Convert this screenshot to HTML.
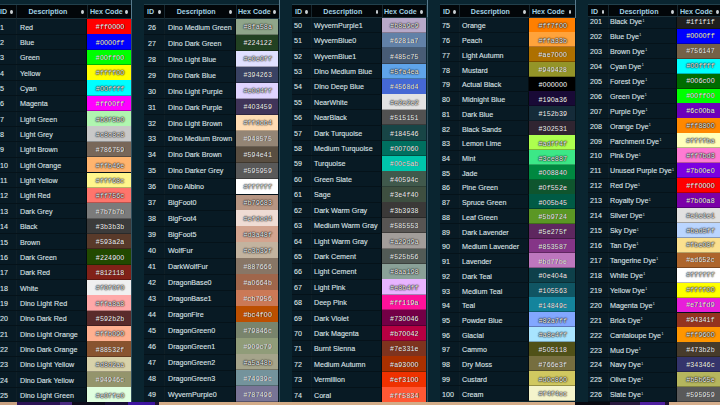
<!DOCTYPE html><html><head><meta charset="utf-8"><style>
html,body{margin:0;padding:0;}
body{width:720px;height:405px;overflow:hidden;position:relative;background:#0a2530;font-family:"Liberation Sans",sans-serif;}
.a{position:absolute;box-sizing:border-box;}
.t{position:absolute;white-space:nowrap;font-size:8.1px;letter-spacing:0px;color:#dde2e6;-webkit-text-stroke:0.12px #dde2e6;transform:scaleX(0.88);transform-origin:0 50%;}
.h{position:absolute;white-space:nowrap;font-size:8.1px;font-weight:bold;color:#a2d2e4;transform:scaleX(0.875);transform-origin:0 50%;}
.x{position:absolute;white-space:nowrap;font-family:"Liberation Mono",monospace;font-size:7.4px;color:#f6f6f6;text-align:center;transform:scaleX(0.92);}
.sup{font-size:4px;vertical-align:2.6px;margin-left:0.4px;line-height:0;-webkit-text-stroke:0;}
.dot{position:absolute;width:2.8px;height:4px;border-radius:50%;background:#c9cfd2;}

</style></head><body>
<div class="a" style="left:-3.50px;top:4.7px;width:134.80px;height:398.05px;background:#081a24"></div>
<div class="a" style="left:16.00px;top:19.00px;width:0.8px;height:383.75px;background:#0f1f27"></div>
<div class="a" style="left:86.20px;top:19.00px;width:0.9px;height:383.75px;background:#040c10"></div>
<div class="a" style="left:-3.50px;top:33.75px;width:90.50px;height:0.8px;background:#051219"></div>
<div class="a" style="left:87.00px;top:19.00px;width:44.30px;height:15.35px;background:#ff0000"></div>
<div class="a" style="left:87.00px;top:33.55px;width:44.30px;height:0.8px;background:rgba(0,0,0,0.28)"></div>
<div class="t" style="left:0.30px;top:19.60px;height:15.35px;line-height:15.35px;">1</div>
<div class="t" style="left:20.00px;top:19.60px;height:15.35px;line-height:15.35px;">Red</div>
<div class="x" style="left:87.50px;width:44.30px;top:20.40px;height:15.35px;line-height:15.35px;text-shadow:0.4px 0.4px 0.6px #000">#ffOOOO</div>
<div class="a" style="left:-3.50px;top:49.10px;width:90.50px;height:0.8px;background:#051219"></div>
<div class="a" style="left:87.00px;top:34.35px;width:44.30px;height:15.35px;background:#0000ff"></div>
<div class="a" style="left:87.00px;top:48.90px;width:44.30px;height:0.8px;background:rgba(0,0,0,0.28)"></div>
<div class="t" style="left:0.30px;top:34.95px;height:15.35px;line-height:15.35px;">2</div>
<div class="t" style="left:20.00px;top:34.95px;height:15.35px;line-height:15.35px;">Blue</div>
<div class="x" style="left:87.50px;width:44.30px;top:35.75px;height:15.35px;line-height:15.35px;text-shadow:0.4px 0.4px 0.6px #000">#OOOOff</div>
<div class="a" style="left:-3.50px;top:64.45px;width:90.50px;height:0.8px;background:#051219"></div>
<div class="a" style="left:87.00px;top:49.70px;width:44.30px;height:15.35px;background:#00ff00"></div>
<div class="a" style="left:87.00px;top:64.25px;width:44.30px;height:0.8px;background:rgba(0,0,0,0.28)"></div>
<div class="t" style="left:0.30px;top:50.30px;height:15.35px;line-height:15.35px;">3</div>
<div class="t" style="left:20.00px;top:50.30px;height:15.35px;line-height:15.35px;">Green</div>
<div class="x" style="left:87.50px;width:44.30px;top:51.10px;height:15.35px;line-height:15.35px;text-shadow:0.4px 0.4px 0.6px #000">#OOffOO</div>
<div class="a" style="left:-3.50px;top:79.80px;width:90.50px;height:0.8px;background:#051219"></div>
<div class="a" style="left:87.00px;top:65.05px;width:44.30px;height:15.35px;background:#ffff00"></div>
<div class="a" style="left:87.00px;top:79.60px;width:44.30px;height:0.8px;background:rgba(0,0,0,0.28)"></div>
<div class="t" style="left:0.30px;top:65.65px;height:15.35px;line-height:15.35px;">4</div>
<div class="t" style="left:20.00px;top:65.65px;height:15.35px;line-height:15.35px;">Yellow</div>
<div class="x" style="left:87.50px;width:44.30px;top:66.45px;height:15.35px;line-height:15.35px;color:#f6f6f6;text-shadow:0 0 1px #000,0 0 1.5px #000,0 0 2px rgba(0,0,0,0.6)">#ffffOO</div>
<div class="a" style="left:-3.50px;top:95.15px;width:90.50px;height:0.8px;background:#051219"></div>
<div class="a" style="left:87.00px;top:80.40px;width:44.30px;height:15.35px;background:#00ffff"></div>
<div class="a" style="left:87.00px;top:94.95px;width:44.30px;height:0.8px;background:rgba(0,0,0,0.28)"></div>
<div class="t" style="left:0.30px;top:81.00px;height:15.35px;line-height:15.35px;">5</div>
<div class="t" style="left:20.00px;top:81.00px;height:15.35px;line-height:15.35px;">Cyan</div>
<div class="x" style="left:87.50px;width:44.30px;top:81.80px;height:15.35px;line-height:15.35px;color:#f6f6f6;text-shadow:0 0 1px #000,0 0 1.5px #000,0 0 2px rgba(0,0,0,0.6)">#OOffff</div>
<div class="a" style="left:-3.50px;top:110.50px;width:90.50px;height:0.8px;background:#051219"></div>
<div class="a" style="left:87.00px;top:95.75px;width:44.30px;height:15.35px;background:#ff00ff"></div>
<div class="a" style="left:87.00px;top:110.30px;width:44.30px;height:0.8px;background:rgba(0,0,0,0.28)"></div>
<div class="t" style="left:0.30px;top:96.35px;height:15.35px;line-height:15.35px;">6</div>
<div class="t" style="left:20.00px;top:96.35px;height:15.35px;line-height:15.35px;">Magenta</div>
<div class="x" style="left:87.50px;width:44.30px;top:97.15px;height:15.35px;line-height:15.35px;text-shadow:0.4px 0.4px 0.6px #000">#ffOOff</div>
<div class="a" style="left:-3.50px;top:125.85px;width:90.50px;height:0.8px;background:#051219"></div>
<div class="a" style="left:87.00px;top:111.10px;width:44.30px;height:15.35px;background:#b0f5b0"></div>
<div class="a" style="left:87.00px;top:125.65px;width:44.30px;height:0.8px;background:rgba(0,0,0,0.28)"></div>
<div class="t" style="left:0.30px;top:111.70px;height:15.35px;line-height:15.35px;">7</div>
<div class="t" style="left:20.00px;top:111.70px;height:15.35px;line-height:15.35px;">Light Green</div>
<div class="x" style="left:87.50px;width:44.30px;top:112.50px;height:15.35px;line-height:15.35px;color:#f6f6f6;text-shadow:0 0 1px #000,0 0 1.5px #000,0 0 2px rgba(0,0,0,0.6)">#bOf5bO</div>
<div class="a" style="left:-3.50px;top:141.20px;width:90.50px;height:0.8px;background:#051219"></div>
<div class="a" style="left:87.00px;top:126.45px;width:44.30px;height:15.35px;background:#c8c8c8"></div>
<div class="a" style="left:87.00px;top:141.00px;width:44.30px;height:0.8px;background:rgba(0,0,0,0.28)"></div>
<div class="t" style="left:0.30px;top:127.05px;height:15.35px;line-height:15.35px;">8</div>
<div class="t" style="left:20.00px;top:127.05px;height:15.35px;line-height:15.35px;">Light Grey</div>
<div class="x" style="left:87.50px;width:44.30px;top:127.85px;height:15.35px;line-height:15.35px;color:#f6f6f6;text-shadow:0 0 1px #000,0 0 1.5px #000,0 0 2px rgba(0,0,0,0.6)">#c8c8c8</div>
<div class="a" style="left:-3.50px;top:156.55px;width:90.50px;height:0.8px;background:#051219"></div>
<div class="a" style="left:87.00px;top:141.80px;width:44.30px;height:15.35px;background:#786759"></div>
<div class="a" style="left:87.00px;top:156.35px;width:44.30px;height:0.8px;background:rgba(0,0,0,0.28)"></div>
<div class="t" style="left:0.30px;top:142.40px;height:15.35px;line-height:15.35px;">9</div>
<div class="t" style="left:20.00px;top:142.40px;height:15.35px;line-height:15.35px;">Light Brown</div>
<div class="x" style="left:87.50px;width:44.30px;top:143.20px;height:15.35px;line-height:15.35px;text-shadow:0.4px 0.4px 0.6px #000">#786759</div>
<div class="a" style="left:-3.50px;top:171.90px;width:90.50px;height:0.8px;background:#051219"></div>
<div class="a" style="left:87.00px;top:157.15px;width:44.30px;height:15.35px;background:#ffb46e"></div>
<div class="a" style="left:87.00px;top:171.70px;width:44.30px;height:0.8px;background:rgba(0,0,0,0.28)"></div>
<div class="t" style="left:0.30px;top:157.75px;height:15.35px;line-height:15.35px;">10</div>
<div class="t" style="left:20.00px;top:157.75px;height:15.35px;line-height:15.35px;">Light Orange</div>
<div class="x" style="left:87.50px;width:44.30px;top:158.55px;height:15.35px;line-height:15.35px;color:#f6f6f6;text-shadow:0 0 1px #000,0 0 1.5px #000,0 0 2px rgba(0,0,0,0.6)">#ffb46e</div>
<div class="a" style="left:-3.50px;top:187.25px;width:90.50px;height:0.8px;background:#051219"></div>
<div class="a" style="left:87.00px;top:172.50px;width:44.30px;height:15.35px;background:#fff68c"></div>
<div class="a" style="left:87.00px;top:187.05px;width:44.30px;height:0.8px;background:rgba(0,0,0,0.28)"></div>
<div class="t" style="left:0.30px;top:173.10px;height:15.35px;line-height:15.35px;">11</div>
<div class="t" style="left:20.00px;top:173.10px;height:15.35px;line-height:15.35px;">Light Yellow</div>
<div class="x" style="left:87.50px;width:44.30px;top:173.90px;height:15.35px;line-height:15.35px;color:#f6f6f6;text-shadow:0 0 1px #000,0 0 1.5px #000,0 0 2px rgba(0,0,0,0.6)">#fff68c</div>
<div class="a" style="left:-3.50px;top:202.60px;width:90.50px;height:0.8px;background:#051219"></div>
<div class="a" style="left:87.00px;top:187.85px;width:44.30px;height:15.35px;background:#ff756c"></div>
<div class="a" style="left:87.00px;top:202.40px;width:44.30px;height:0.8px;background:rgba(0,0,0,0.28)"></div>
<div class="t" style="left:0.30px;top:188.45px;height:15.35px;line-height:15.35px;">12</div>
<div class="t" style="left:20.00px;top:188.45px;height:15.35px;line-height:15.35px;">Light Red</div>
<div class="x" style="left:87.50px;width:44.30px;top:189.25px;height:15.35px;line-height:15.35px;color:#f6f6f6;text-shadow:0 0 1px #000,0 0 1.5px #000,0 0 2px rgba(0,0,0,0.6)">#ff756c</div>
<div class="a" style="left:-3.50px;top:217.95px;width:90.50px;height:0.8px;background:#051219"></div>
<div class="a" style="left:87.00px;top:203.20px;width:44.30px;height:15.35px;background:#7b7b7b"></div>
<div class="a" style="left:87.00px;top:217.75px;width:44.30px;height:0.8px;background:rgba(0,0,0,0.28)"></div>
<div class="t" style="left:0.30px;top:203.80px;height:15.35px;line-height:15.35px;">13</div>
<div class="t" style="left:20.00px;top:203.80px;height:15.35px;line-height:15.35px;">Dark Grey</div>
<div class="x" style="left:87.50px;width:44.30px;top:204.60px;height:15.35px;line-height:15.35px;text-shadow:0.4px 0.4px 0.6px #000">#7b7b7b</div>
<div class="a" style="left:-3.50px;top:233.30px;width:90.50px;height:0.8px;background:#051219"></div>
<div class="a" style="left:87.00px;top:218.55px;width:44.30px;height:15.35px;background:#3b3b3b"></div>
<div class="a" style="left:87.00px;top:233.10px;width:44.30px;height:0.8px;background:rgba(0,0,0,0.28)"></div>
<div class="t" style="left:0.30px;top:219.15px;height:15.35px;line-height:15.35px;">14</div>
<div class="t" style="left:20.00px;top:219.15px;height:15.35px;line-height:15.35px;">Black</div>
<div class="x" style="left:87.50px;width:44.30px;top:219.95px;height:15.35px;line-height:15.35px;text-shadow:0.4px 0.4px 0.6px #000">#3b3b3b</div>
<div class="a" style="left:-3.50px;top:248.65px;width:90.50px;height:0.8px;background:#051219"></div>
<div class="a" style="left:87.00px;top:233.90px;width:44.30px;height:15.35px;background:#593a2a"></div>
<div class="a" style="left:87.00px;top:248.45px;width:44.30px;height:0.8px;background:rgba(0,0,0,0.28)"></div>
<div class="t" style="left:0.30px;top:234.50px;height:15.35px;line-height:15.35px;">15</div>
<div class="t" style="left:20.00px;top:234.50px;height:15.35px;line-height:15.35px;">Brown</div>
<div class="x" style="left:87.50px;width:44.30px;top:235.30px;height:15.35px;line-height:15.35px;text-shadow:0.4px 0.4px 0.6px #000">#593a2a</div>
<div class="a" style="left:-3.50px;top:264.00px;width:90.50px;height:0.8px;background:#051219"></div>
<div class="a" style="left:87.00px;top:249.25px;width:44.30px;height:15.35px;background:#224900"></div>
<div class="a" style="left:87.00px;top:263.80px;width:44.30px;height:0.8px;background:rgba(0,0,0,0.28)"></div>
<div class="t" style="left:0.30px;top:249.85px;height:15.35px;line-height:15.35px;">16</div>
<div class="t" style="left:20.00px;top:249.85px;height:15.35px;line-height:15.35px;">Dark Green</div>
<div class="x" style="left:87.50px;width:44.30px;top:250.65px;height:15.35px;line-height:15.35px;text-shadow:0.4px 0.4px 0.6px #000">#2249OO</div>
<div class="a" style="left:-3.50px;top:279.35px;width:90.50px;height:0.8px;background:#051219"></div>
<div class="a" style="left:87.00px;top:264.60px;width:44.30px;height:15.35px;background:#812118"></div>
<div class="a" style="left:87.00px;top:279.15px;width:44.30px;height:0.8px;background:rgba(0,0,0,0.28)"></div>
<div class="t" style="left:0.30px;top:265.20px;height:15.35px;line-height:15.35px;">17</div>
<div class="t" style="left:20.00px;top:265.20px;height:15.35px;line-height:15.35px;">Dark Red</div>
<div class="x" style="left:87.50px;width:44.30px;top:266.00px;height:15.35px;line-height:15.35px;text-shadow:0.4px 0.4px 0.6px #000">#812118</div>
<div class="a" style="left:-3.50px;top:294.70px;width:90.50px;height:0.8px;background:#051219"></div>
<div class="a" style="left:87.00px;top:279.95px;width:44.30px;height:15.35px;background:#f0f0f0"></div>
<div class="a" style="left:87.00px;top:294.50px;width:44.30px;height:0.8px;background:rgba(0,0,0,0.28)"></div>
<div class="t" style="left:0.30px;top:280.55px;height:15.35px;line-height:15.35px;">18</div>
<div class="t" style="left:20.00px;top:280.55px;height:15.35px;line-height:15.35px;">White</div>
<div class="x" style="left:87.50px;width:44.30px;top:281.35px;height:15.35px;line-height:15.35px;color:#f6f6f6;text-shadow:0 0 1px #000,0 0 1.5px #000,0 0 2px rgba(0,0,0,0.6)">#fOfOfO</div>
<div class="a" style="left:-3.50px;top:310.05px;width:90.50px;height:0.8px;background:#051219"></div>
<div class="a" style="left:87.00px;top:295.30px;width:44.30px;height:15.35px;background:#ffa8a8"></div>
<div class="a" style="left:87.00px;top:309.85px;width:44.30px;height:0.8px;background:rgba(0,0,0,0.28)"></div>
<div class="t" style="left:0.30px;top:295.90px;height:15.35px;line-height:15.35px;">19</div>
<div class="t" style="left:20.00px;top:295.90px;height:15.35px;line-height:15.35px;">Dino Light Red</div>
<div class="x" style="left:87.50px;width:44.30px;top:296.70px;height:15.35px;line-height:15.35px;color:#f6f6f6;text-shadow:0 0 1px #000,0 0 1.5px #000,0 0 2px rgba(0,0,0,0.6)">#ffa8a8</div>
<div class="a" style="left:-3.50px;top:325.40px;width:90.50px;height:0.8px;background:#051219"></div>
<div class="a" style="left:87.00px;top:310.65px;width:44.30px;height:15.35px;background:#592b2b"></div>
<div class="a" style="left:87.00px;top:325.20px;width:44.30px;height:0.8px;background:rgba(0,0,0,0.28)"></div>
<div class="t" style="left:0.30px;top:311.25px;height:15.35px;line-height:15.35px;">20</div>
<div class="t" style="left:20.00px;top:311.25px;height:15.35px;line-height:15.35px;">Dino Dark Red</div>
<div class="x" style="left:87.50px;width:44.30px;top:312.05px;height:15.35px;line-height:15.35px;text-shadow:0.4px 0.4px 0.6px #000">#592b2b</div>
<div class="a" style="left:-3.50px;top:340.75px;width:90.50px;height:0.8px;background:#051219"></div>
<div class="a" style="left:87.00px;top:326.00px;width:44.30px;height:15.35px;background:#ffb090"></div>
<div class="a" style="left:87.00px;top:340.55px;width:44.30px;height:0.8px;background:rgba(0,0,0,0.28)"></div>
<div class="t" style="left:0.30px;top:326.60px;height:15.35px;line-height:15.35px;">21</div>
<div class="t" style="left:20.00px;top:326.60px;height:15.35px;line-height:15.35px;">Dino Light Orange</div>
<div class="x" style="left:87.50px;width:44.30px;top:327.40px;height:15.35px;line-height:15.35px;color:#f6f6f6;text-shadow:0 0 1px #000,0 0 1.5px #000,0 0 2px rgba(0,0,0,0.6)">#ffbO9O</div>
<div class="a" style="left:-3.50px;top:356.10px;width:90.50px;height:0.8px;background:#051219"></div>
<div class="a" style="left:87.00px;top:341.35px;width:44.30px;height:15.35px;background:#88532f"></div>
<div class="a" style="left:87.00px;top:355.90px;width:44.30px;height:0.8px;background:rgba(0,0,0,0.28)"></div>
<div class="t" style="left:0.30px;top:341.95px;height:15.35px;line-height:15.35px;">22</div>
<div class="t" style="left:20.00px;top:341.95px;height:15.35px;line-height:15.35px;">Dino Dark Orange</div>
<div class="x" style="left:87.50px;width:44.30px;top:342.75px;height:15.35px;line-height:15.35px;text-shadow:0.4px 0.4px 0.6px #000">#88532f</div>
<div class="a" style="left:-3.50px;top:371.45px;width:90.50px;height:0.8px;background:#051219"></div>
<div class="a" style="left:87.00px;top:356.70px;width:44.30px;height:15.35px;background:#d8d2aa"></div>
<div class="a" style="left:87.00px;top:371.25px;width:44.30px;height:0.8px;background:rgba(0,0,0,0.28)"></div>
<div class="t" style="left:0.30px;top:357.30px;height:15.35px;line-height:15.35px;">23</div>
<div class="t" style="left:20.00px;top:357.30px;height:15.35px;line-height:15.35px;">Dino Light Yellow</div>
<div class="x" style="left:87.50px;width:44.30px;top:358.10px;height:15.35px;line-height:15.35px;color:#f6f6f6;text-shadow:0 0 1px #000,0 0 1.5px #000,0 0 2px rgba(0,0,0,0.6)">#d8d2aa</div>
<div class="a" style="left:-3.50px;top:386.80px;width:90.50px;height:0.8px;background:#051219"></div>
<div class="a" style="left:87.00px;top:372.05px;width:44.30px;height:15.35px;background:#94946c"></div>
<div class="a" style="left:87.00px;top:386.60px;width:44.30px;height:0.8px;background:rgba(0,0,0,0.28)"></div>
<div class="t" style="left:0.30px;top:372.65px;height:15.35px;line-height:15.35px;">24</div>
<div class="t" style="left:20.00px;top:372.65px;height:15.35px;line-height:15.35px;">Dino Dark Yellow</div>
<div class="x" style="left:87.50px;width:44.30px;top:373.45px;height:15.35px;line-height:15.35px;text-shadow:0.4px 0.4px 0.6px #000">#94946c</div>
<div class="a" style="left:-3.50px;top:402.15px;width:90.50px;height:0.8px;background:#051219"></div>
<div class="a" style="left:87.00px;top:387.40px;width:44.30px;height:15.35px;background:#e0ffe0"></div>
<div class="a" style="left:87.00px;top:401.95px;width:44.30px;height:0.8px;background:rgba(0,0,0,0.28)"></div>
<div class="t" style="left:0.30px;top:388.00px;height:15.35px;line-height:15.35px;">25</div>
<div class="t" style="left:20.00px;top:388.00px;height:15.35px;line-height:15.35px;">Dino Light Green</div>
<div class="x" style="left:87.50px;width:44.30px;top:388.80px;height:15.35px;line-height:15.35px;color:#f6f6f6;text-shadow:0 0 1px #000,0 0 1.5px #000,0 0 2px rgba(0,0,0,0.6)">#eOffeO</div>
<div class="a" style="left:-3.50px;top:4.2px;width:134.80px;height:14.80px;background:#020609;border-top:1px solid #22404c"></div>
<div class="a" style="left:-3.50px;top:18.40px;width:134.80px;height:1px;background:#1c313a"></div>
<div class="h" style="left:0.10px;top:7.30px;height:10px;line-height:10px;">ID</div>
<div class="h" style="left:16.00px;top:7.30px;height:10px;line-height:10px;width:63.80px;text-align:center;transform-origin:50% 50%;">Description</div>
<div class="h" style="left:89.50px;top:7.30px;height:10px;line-height:10px;">Hex Code</div>
<div class="dot" style="left:9.90px;top:9.9px"></div>
<div class="dot" style="left:80.90px;top:9.9px"></div>
<div class="dot" style="left:125.20px;top:9.9px"></div>
<div class="a" style="left:16.00px;top:4.7px;width:1px;height:14.30px;background:#16262e"></div>
<div class="a" style="left:87.00px;top:4.7px;width:1px;height:14.30px;background:#16262e"></div>
<div class="a" style="left:131.30px;top:0px;width:1px;height:19.00px;background:#587a8c"></div>
<div class="a" style="left:131.30px;top:19.00px;width:1px;height:383.75px;background:rgba(140,170,190,0.32)"></div>
<div class="a" style="left:144.40px;top:4.7px;width:134.60px;height:397.55px;background:#081a24"></div>
<div class="a" style="left:164.00px;top:18.73px;width:0.8px;height:383.52px;background:#0f1f27"></div>
<div class="a" style="left:234.70px;top:18.73px;width:0.9px;height:383.52px;background:#040c10"></div>
<div class="a" style="left:144.40px;top:34.11px;width:91.10px;height:0.8px;background:#051219"></div>
<div class="a" style="left:235.50px;top:18.73px;width:42.50px;height:15.98px;background:#8fa58a"></div>
<div class="a" style="left:235.50px;top:33.91px;width:43.50px;height:0.8px;background:rgba(0,0,0,0.28)"></div>
<div class="t" style="left:147.60px;top:19.63px;height:15.98px;line-height:15.98px;">26</div>
<div class="t" style="left:168.00px;top:19.63px;height:15.98px;line-height:15.98px;">Dino Medium Green</div>
<div class="x" style="left:236.00px;width:43.50px;top:20.13px;height:15.98px;line-height:15.98px;color:#f6f6f6;text-shadow:0 0 1px #000,0 0 1.5px #000,0 0 2px rgba(0,0,0,0.6)">#8fa58a</div>
<div class="a" style="left:144.40px;top:50.09px;width:91.10px;height:0.8px;background:#051219"></div>
<div class="a" style="left:235.50px;top:34.71px;width:42.50px;height:15.98px;background:#224122"></div>
<div class="a" style="left:235.50px;top:49.89px;width:43.50px;height:0.8px;background:rgba(0,0,0,0.28)"></div>
<div class="t" style="left:147.60px;top:35.61px;height:15.98px;line-height:15.98px;">27</div>
<div class="t" style="left:168.00px;top:35.61px;height:15.98px;line-height:15.98px;">Dino Dark Green</div>
<div class="x" style="left:236.00px;width:43.50px;top:36.11px;height:15.98px;line-height:15.98px;text-shadow:0.4px 0.4px 0.6px #000">#224122</div>
<div class="a" style="left:144.40px;top:66.07px;width:91.10px;height:0.8px;background:#051219"></div>
<div class="a" style="left:235.50px;top:50.69px;width:42.50px;height:15.98px;background:#e0e0ff"></div>
<div class="a" style="left:235.50px;top:65.87px;width:43.50px;height:0.8px;background:rgba(0,0,0,0.28)"></div>
<div class="t" style="left:147.60px;top:51.59px;height:15.98px;line-height:15.98px;">28</div>
<div class="t" style="left:168.00px;top:51.59px;height:15.98px;line-height:15.98px;">Dino Light Blue</div>
<div class="x" style="left:236.00px;width:43.50px;top:52.09px;height:15.98px;line-height:15.98px;color:#f6f6f6;text-shadow:0 0 1px #000,0 0 1.5px #000,0 0 2px rgba(0,0,0,0.6)">#eOeOff</div>
<div class="a" style="left:144.40px;top:82.05px;width:91.10px;height:0.8px;background:#051219"></div>
<div class="a" style="left:235.50px;top:66.67px;width:42.50px;height:15.98px;background:#394263"></div>
<div class="a" style="left:235.50px;top:81.85px;width:43.50px;height:0.8px;background:rgba(0,0,0,0.28)"></div>
<div class="t" style="left:147.60px;top:67.57px;height:15.98px;line-height:15.98px;">29</div>
<div class="t" style="left:168.00px;top:67.57px;height:15.98px;line-height:15.98px;">Dino Dark Blue</div>
<div class="x" style="left:236.00px;width:43.50px;top:68.07px;height:15.98px;line-height:15.98px;text-shadow:0.4px 0.4px 0.6px #000">#394263</div>
<div class="a" style="left:144.40px;top:98.03px;width:91.10px;height:0.8px;background:#051219"></div>
<div class="a" style="left:235.50px;top:82.65px;width:42.50px;height:15.98px;background:#e0d4ff"></div>
<div class="a" style="left:235.50px;top:97.83px;width:43.50px;height:0.8px;background:rgba(0,0,0,0.28)"></div>
<div class="t" style="left:147.60px;top:83.55px;height:15.98px;line-height:15.98px;">30</div>
<div class="t" style="left:168.00px;top:83.55px;height:15.98px;line-height:15.98px;">Dino Light Purple</div>
<div class="x" style="left:236.00px;width:43.50px;top:84.05px;height:15.98px;line-height:15.98px;color:#f6f6f6;text-shadow:0 0 1px #000,0 0 1.5px #000,0 0 2px rgba(0,0,0,0.6)">#eOd4ff</div>
<div class="a" style="left:144.40px;top:114.01px;width:91.10px;height:0.8px;background:#051219"></div>
<div class="a" style="left:235.50px;top:98.63px;width:42.50px;height:15.98px;background:#403459"></div>
<div class="a" style="left:235.50px;top:113.81px;width:43.50px;height:0.8px;background:rgba(0,0,0,0.28)"></div>
<div class="t" style="left:147.60px;top:99.53px;height:15.98px;line-height:15.98px;">31</div>
<div class="t" style="left:168.00px;top:99.53px;height:15.98px;line-height:15.98px;">Dino Dark Purple</div>
<div class="x" style="left:236.00px;width:43.50px;top:100.03px;height:15.98px;line-height:15.98px;text-shadow:0.4px 0.4px 0.6px #000">#4O3459</div>
<div class="a" style="left:144.40px;top:129.99px;width:91.10px;height:0.8px;background:#051219"></div>
<div class="a" style="left:235.50px;top:114.61px;width:42.50px;height:15.98px;background:#ffdcb4"></div>
<div class="a" style="left:235.50px;top:129.79px;width:43.50px;height:0.8px;background:rgba(0,0,0,0.28)"></div>
<div class="t" style="left:147.60px;top:115.51px;height:15.98px;line-height:15.98px;">32</div>
<div class="t" style="left:168.00px;top:115.51px;height:15.98px;line-height:15.98px;">Dino Light Brown</div>
<div class="x" style="left:236.00px;width:43.50px;top:116.01px;height:15.98px;line-height:15.98px;color:#f6f6f6;text-shadow:0 0 1px #000,0 0 1.5px #000,0 0 2px rgba(0,0,0,0.6)">#ffdcb4</div>
<div class="a" style="left:144.40px;top:145.97px;width:91.10px;height:0.8px;background:#051219"></div>
<div class="a" style="left:235.50px;top:130.59px;width:42.50px;height:15.98px;background:#948575"></div>
<div class="a" style="left:235.50px;top:145.77px;width:43.50px;height:0.8px;background:rgba(0,0,0,0.28)"></div>
<div class="t" style="left:147.60px;top:131.49px;height:15.98px;line-height:15.98px;">33</div>
<div class="t" style="left:168.00px;top:131.49px;height:15.98px;line-height:15.98px;">Dino Medium Brown</div>
<div class="x" style="left:236.00px;width:43.50px;top:131.99px;height:15.98px;line-height:15.98px;text-shadow:0.4px 0.4px 0.6px #000">#948575</div>
<div class="a" style="left:144.40px;top:161.95px;width:91.10px;height:0.8px;background:#051219"></div>
<div class="a" style="left:235.50px;top:146.57px;width:42.50px;height:15.98px;background:#594e41"></div>
<div class="a" style="left:235.50px;top:161.75px;width:43.50px;height:0.8px;background:rgba(0,0,0,0.28)"></div>
<div class="t" style="left:147.60px;top:147.47px;height:15.98px;line-height:15.98px;">34</div>
<div class="t" style="left:168.00px;top:147.47px;height:15.98px;line-height:15.98px;">Dino Dark Brown</div>
<div class="x" style="left:236.00px;width:43.50px;top:147.97px;height:15.98px;line-height:15.98px;text-shadow:0.4px 0.4px 0.6px #000">#594e41</div>
<div class="a" style="left:144.40px;top:177.93px;width:91.10px;height:0.8px;background:#051219"></div>
<div class="a" style="left:235.50px;top:162.55px;width:42.50px;height:15.98px;background:#595959"></div>
<div class="a" style="left:235.50px;top:177.73px;width:43.50px;height:0.8px;background:rgba(0,0,0,0.28)"></div>
<div class="t" style="left:147.60px;top:163.45px;height:15.98px;line-height:15.98px;">35</div>
<div class="t" style="left:168.00px;top:163.45px;height:15.98px;line-height:15.98px;">Dino Darker Grey</div>
<div class="x" style="left:236.00px;width:43.50px;top:163.95px;height:15.98px;line-height:15.98px;text-shadow:0.4px 0.4px 0.6px #000">#595959</div>
<div class="a" style="left:144.40px;top:193.91px;width:91.10px;height:0.8px;background:#051219"></div>
<div class="a" style="left:235.50px;top:178.53px;width:42.50px;height:15.98px;background:#ffffff"></div>
<div class="a" style="left:235.50px;top:193.71px;width:43.50px;height:0.8px;background:rgba(0,0,0,0.28)"></div>
<div class="t" style="left:147.60px;top:179.43px;height:15.98px;line-height:15.98px;">36</div>
<div class="t" style="left:168.00px;top:179.43px;height:15.98px;line-height:15.98px;">Dino Albino</div>
<div class="x" style="left:236.00px;width:43.50px;top:179.93px;height:15.98px;line-height:15.98px;color:#f6f6f6;text-shadow:0 0 1px #000,0 0 1.5px #000,0 0 2px rgba(0,0,0,0.6)">#ffffff</div>
<div class="a" style="left:144.40px;top:209.89px;width:91.10px;height:0.8px;background:#051219"></div>
<div class="a" style="left:235.50px;top:194.51px;width:42.50px;height:15.98px;background:#b79683"></div>
<div class="a" style="left:235.50px;top:209.69px;width:43.50px;height:0.8px;background:rgba(0,0,0,0.28)"></div>
<div class="t" style="left:147.60px;top:195.41px;height:15.98px;line-height:15.98px;">37</div>
<div class="t" style="left:168.00px;top:195.41px;height:15.98px;line-height:15.98px;">BigFoot0</div>
<div class="x" style="left:236.00px;width:43.50px;top:195.91px;height:15.98px;line-height:15.98px;color:#f6f6f6;text-shadow:0 0 1px #000,0 0 1.5px #000,0 0 2px rgba(0,0,0,0.6)">#b79683</div>
<div class="a" style="left:144.40px;top:225.87px;width:91.10px;height:0.8px;background:#051219"></div>
<div class="a" style="left:235.50px;top:210.49px;width:42.50px;height:15.98px;background:#efdcd4"></div>
<div class="a" style="left:235.50px;top:225.67px;width:43.50px;height:0.8px;background:rgba(0,0,0,0.28)"></div>
<div class="t" style="left:147.60px;top:211.39px;height:15.98px;line-height:15.98px;">38</div>
<div class="t" style="left:168.00px;top:211.39px;height:15.98px;line-height:15.98px;">BigFoot4</div>
<div class="x" style="left:236.00px;width:43.50px;top:211.89px;height:15.98px;line-height:15.98px;color:#f6f6f6;text-shadow:0 0 1px #000,0 0 1.5px #000,0 0 2px rgba(0,0,0,0.6)">#efdcd4</div>
<div class="a" style="left:144.40px;top:241.85px;width:91.10px;height:0.8px;background:#051219"></div>
<div class="a" style="left:235.50px;top:226.47px;width:42.50px;height:15.98px;background:#d3a48f"></div>
<div class="a" style="left:235.50px;top:241.65px;width:43.50px;height:0.8px;background:rgba(0,0,0,0.28)"></div>
<div class="t" style="left:147.60px;top:227.37px;height:15.98px;line-height:15.98px;">39</div>
<div class="t" style="left:168.00px;top:227.37px;height:15.98px;line-height:15.98px;">BigFoot5</div>
<div class="x" style="left:236.00px;width:43.50px;top:227.87px;height:15.98px;line-height:15.98px;color:#f6f6f6;text-shadow:0 0 1px #000,0 0 1.5px #000,0 0 2px rgba(0,0,0,0.6)">#d3a48f</div>
<div class="a" style="left:144.40px;top:257.83px;width:91.10px;height:0.8px;background:#051219"></div>
<div class="a" style="left:235.50px;top:242.45px;width:42.50px;height:15.98px;background:#c3b39f"></div>
<div class="a" style="left:235.50px;top:257.63px;width:43.50px;height:0.8px;background:rgba(0,0,0,0.28)"></div>
<div class="t" style="left:147.60px;top:243.35px;height:15.98px;line-height:15.98px;">40</div>
<div class="t" style="left:168.00px;top:243.35px;height:15.98px;line-height:15.98px;">WolfFur</div>
<div class="x" style="left:236.00px;width:43.50px;top:243.85px;height:15.98px;line-height:15.98px;color:#f6f6f6;text-shadow:0 0 1px #000,0 0 1.5px #000,0 0 2px rgba(0,0,0,0.6)">#c3b39f</div>
<div class="a" style="left:144.40px;top:273.81px;width:91.10px;height:0.8px;background:#051219"></div>
<div class="a" style="left:235.50px;top:258.43px;width:42.50px;height:15.98px;background:#887666"></div>
<div class="a" style="left:235.50px;top:273.61px;width:43.50px;height:0.8px;background:rgba(0,0,0,0.28)"></div>
<div class="t" style="left:147.60px;top:259.33px;height:15.98px;line-height:15.98px;">41</div>
<div class="t" style="left:168.00px;top:259.33px;height:15.98px;line-height:15.98px;">DarkWolfFur</div>
<div class="x" style="left:236.00px;width:43.50px;top:259.83px;height:15.98px;line-height:15.98px;text-shadow:0.4px 0.4px 0.6px #000">#887666</div>
<div class="a" style="left:144.40px;top:289.79px;width:91.10px;height:0.8px;background:#051219"></div>
<div class="a" style="left:235.50px;top:274.41px;width:42.50px;height:15.98px;background:#a0664b"></div>
<div class="a" style="left:235.50px;top:289.59px;width:43.50px;height:0.8px;background:rgba(0,0,0,0.28)"></div>
<div class="t" style="left:147.60px;top:275.31px;height:15.98px;line-height:15.98px;">42</div>
<div class="t" style="left:168.00px;top:275.31px;height:15.98px;line-height:15.98px;">DragonBase0</div>
<div class="x" style="left:236.00px;width:43.50px;top:275.81px;height:15.98px;line-height:15.98px;text-shadow:0.4px 0.4px 0.6px #000">#aO664b</div>
<div class="a" style="left:144.40px;top:305.77px;width:91.10px;height:0.8px;background:#051219"></div>
<div class="a" style="left:235.50px;top:290.39px;width:42.50px;height:15.98px;background:#cb7956"></div>
<div class="a" style="left:235.50px;top:305.57px;width:43.50px;height:0.8px;background:rgba(0,0,0,0.28)"></div>
<div class="t" style="left:147.60px;top:291.29px;height:15.98px;line-height:15.98px;">43</div>
<div class="t" style="left:168.00px;top:291.29px;height:15.98px;line-height:15.98px;">DragonBase1</div>
<div class="x" style="left:236.00px;width:43.50px;top:291.79px;height:15.98px;line-height:15.98px;text-shadow:0.4px 0.4px 0.6px #000">#cb7956</div>
<div class="a" style="left:144.40px;top:321.75px;width:91.10px;height:0.8px;background:#051219"></div>
<div class="a" style="left:235.50px;top:306.37px;width:42.50px;height:15.98px;background:#bc4f00"></div>
<div class="a" style="left:235.50px;top:321.55px;width:43.50px;height:0.8px;background:rgba(0,0,0,0.28)"></div>
<div class="t" style="left:147.60px;top:307.27px;height:15.98px;line-height:15.98px;">44</div>
<div class="t" style="left:168.00px;top:307.27px;height:15.98px;line-height:15.98px;">DragonFire</div>
<div class="x" style="left:236.00px;width:43.50px;top:307.77px;height:15.98px;line-height:15.98px;text-shadow:0.4px 0.4px 0.6px #000">#bc4fOO</div>
<div class="a" style="left:144.40px;top:337.73px;width:91.10px;height:0.8px;background:#051219"></div>
<div class="a" style="left:235.50px;top:322.35px;width:42.50px;height:15.98px;background:#79846c"></div>
<div class="a" style="left:235.50px;top:337.53px;width:43.50px;height:0.8px;background:rgba(0,0,0,0.28)"></div>
<div class="t" style="left:147.60px;top:323.25px;height:15.98px;line-height:15.98px;">45</div>
<div class="t" style="left:168.00px;top:323.25px;height:15.98px;line-height:15.98px;">DragonGreen0</div>
<div class="x" style="left:236.00px;width:43.50px;top:323.75px;height:15.98px;line-height:15.98px;text-shadow:0.4px 0.4px 0.6px #000">#79846c</div>
<div class="a" style="left:144.40px;top:353.71px;width:91.10px;height:0.8px;background:#051219"></div>
<div class="a" style="left:235.50px;top:338.33px;width:42.50px;height:15.98px;background:#909c79"></div>
<div class="a" style="left:235.50px;top:353.51px;width:43.50px;height:0.8px;background:rgba(0,0,0,0.28)"></div>
<div class="t" style="left:147.60px;top:339.23px;height:15.98px;line-height:15.98px;">46</div>
<div class="t" style="left:168.00px;top:339.23px;height:15.98px;line-height:15.98px;">DragonGreen1</div>
<div class="x" style="left:236.00px;width:43.50px;top:339.73px;height:15.98px;line-height:15.98px;text-shadow:0.4px 0.4px 0.6px #000">#9O9c79</div>
<div class="a" style="left:144.40px;top:369.69px;width:91.10px;height:0.8px;background:#051219"></div>
<div class="a" style="left:235.50px;top:354.31px;width:42.50px;height:15.98px;background:#a5a48b"></div>
<div class="a" style="left:235.50px;top:369.49px;width:43.50px;height:0.8px;background:rgba(0,0,0,0.28)"></div>
<div class="t" style="left:147.60px;top:355.21px;height:15.98px;line-height:15.98px;">47</div>
<div class="t" style="left:168.00px;top:355.21px;height:15.98px;line-height:15.98px;">DragonGreen2</div>
<div class="x" style="left:236.00px;width:43.50px;top:355.71px;height:15.98px;line-height:15.98px;color:#f6f6f6;text-shadow:0 0 1px #000,0 0 1.5px #000,0 0 2px rgba(0,0,0,0.6)">#a5a48b</div>
<div class="a" style="left:144.40px;top:385.67px;width:91.10px;height:0.8px;background:#051219"></div>
<div class="a" style="left:235.50px;top:370.29px;width:42.50px;height:15.98px;background:#74939c"></div>
<div class="a" style="left:235.50px;top:385.47px;width:43.50px;height:0.8px;background:rgba(0,0,0,0.28)"></div>
<div class="t" style="left:147.60px;top:371.19px;height:15.98px;line-height:15.98px;">48</div>
<div class="t" style="left:168.00px;top:371.19px;height:15.98px;line-height:15.98px;">DragonGreen3</div>
<div class="x" style="left:236.00px;width:43.50px;top:371.69px;height:15.98px;line-height:15.98px;text-shadow:0.4px 0.4px 0.6px #000">#74939c</div>
<div class="a" style="left:144.40px;top:401.65px;width:91.10px;height:0.8px;background:#051219"></div>
<div class="a" style="left:235.50px;top:386.27px;width:42.50px;height:15.98px;background:#787496"></div>
<div class="a" style="left:235.50px;top:401.45px;width:43.50px;height:0.8px;background:rgba(0,0,0,0.28)"></div>
<div class="t" style="left:147.60px;top:387.17px;height:15.98px;line-height:15.98px;">49</div>
<div class="t" style="left:168.00px;top:387.17px;height:15.98px;line-height:15.98px;">WyvernPurple0</div>
<div class="x" style="left:236.00px;width:43.50px;top:387.67px;height:15.98px;line-height:15.98px;text-shadow:0.4px 0.4px 0.6px #000">#787496</div>
<div class="a" style="left:144.40px;top:4.2px;width:134.60px;height:14.53px;background:#020609;border-top:1px solid #22404c"></div>
<div class="a" style="left:144.40px;top:18.13px;width:134.60px;height:1px;background:#1c313a"></div>
<div class="h" style="left:147.40px;top:7.30px;height:10px;line-height:10px;">ID</div>
<div class="h" style="left:164.00px;top:7.30px;height:10px;line-height:10px;width:64.30px;text-align:center;transform-origin:50% 50%;">Description</div>
<div class="h" style="left:238.00px;top:7.30px;height:10px;line-height:10px;">Hex Code</div>
<div class="dot" style="left:157.90px;top:9.9px"></div>
<div class="dot" style="left:229.40px;top:9.9px"></div>
<div class="dot" style="left:272.90px;top:9.9px"></div>
<div class="a" style="left:164.00px;top:4.7px;width:1px;height:14.03px;background:#16262e"></div>
<div class="a" style="left:235.50px;top:4.7px;width:1px;height:14.03px;background:#16262e"></div>
<div class="a" style="left:279.00px;top:0px;width:1px;height:18.73px;background:#587a8c"></div>
<div class="a" style="left:279.00px;top:18.73px;width:1px;height:383.52px;background:rgba(140,170,190,0.32)"></div>
<div class="a" style="left:291.70px;top:4.7px;width:134.80px;height:398.03px;background:#081a24"></div>
<div class="a" style="left:311.00px;top:17.30px;width:0.8px;height:385.43px;background:#0f1f27"></div>
<div class="a" style="left:380.90px;top:17.30px;width:0.9px;height:385.43px;background:#040c10"></div>
<div class="a" style="left:291.70px;top:32.12px;width:90.00px;height:0.8px;background:#051219"></div>
<div class="a" style="left:381.70px;top:17.30px;width:44.80px;height:15.42px;background:#b8a9c9"></div>
<div class="a" style="left:381.70px;top:31.92px;width:44.80px;height:0.8px;background:rgba(0,0,0,0.28)"></div>
<div class="t" style="left:294.10px;top:17.70px;height:15.42px;line-height:15.42px;">50</div>
<div class="t" style="left:314.20px;top:17.70px;height:15.42px;line-height:15.42px;">WyvernPurple1</div>
<div class="x" style="left:382.20px;width:44.80px;top:18.70px;height:15.42px;line-height:15.42px;color:#f6f6f6;text-shadow:0 0 1px #000,0 0 1.5px #000,0 0 2px rgba(0,0,0,0.6)">#b8a9c9</div>
<div class="a" style="left:291.70px;top:47.53px;width:90.00px;height:0.8px;background:#051219"></div>
<div class="a" style="left:381.70px;top:32.72px;width:44.80px;height:15.42px;background:#6281a7"></div>
<div class="a" style="left:381.70px;top:47.33px;width:44.80px;height:0.8px;background:rgba(0,0,0,0.28)"></div>
<div class="t" style="left:294.10px;top:33.12px;height:15.42px;line-height:15.42px;">51</div>
<div class="t" style="left:314.20px;top:33.12px;height:15.42px;line-height:15.42px;">WyvernBlue0</div>
<div class="x" style="left:382.20px;width:44.80px;top:34.12px;height:15.42px;line-height:15.42px;text-shadow:0.4px 0.4px 0.6px #000">#6281a7</div>
<div class="a" style="left:291.70px;top:62.95px;width:90.00px;height:0.8px;background:#051219"></div>
<div class="a" style="left:381.70px;top:48.13px;width:44.80px;height:15.42px;background:#485c75"></div>
<div class="a" style="left:381.70px;top:62.75px;width:44.80px;height:0.8px;background:rgba(0,0,0,0.28)"></div>
<div class="t" style="left:294.10px;top:48.53px;height:15.42px;line-height:15.42px;">52</div>
<div class="t" style="left:314.20px;top:48.53px;height:15.42px;line-height:15.42px;">WyvernBlue1</div>
<div class="x" style="left:382.20px;width:44.80px;top:49.53px;height:15.42px;line-height:15.42px;text-shadow:0.4px 0.4px 0.6px #000">#485c75</div>
<div class="a" style="left:291.70px;top:78.37px;width:90.00px;height:0.8px;background:#051219"></div>
<div class="a" style="left:381.70px;top:63.55px;width:44.80px;height:15.42px;background:#5fa4ea"></div>
<div class="a" style="left:381.70px;top:78.17px;width:44.80px;height:0.8px;background:rgba(0,0,0,0.28)"></div>
<div class="t" style="left:294.10px;top:63.95px;height:15.42px;line-height:15.42px;">53</div>
<div class="t" style="left:314.20px;top:63.95px;height:15.42px;line-height:15.42px;">Dino Medium Blue</div>
<div class="x" style="left:382.20px;width:44.80px;top:64.95px;height:15.42px;line-height:15.42px;color:#f6f6f6;text-shadow:0 0 1px #000,0 0 1.5px #000,0 0 2px rgba(0,0,0,0.6)">#5fa4ea</div>
<div class="a" style="left:291.70px;top:93.79px;width:90.00px;height:0.8px;background:#051219"></div>
<div class="a" style="left:381.70px;top:78.97px;width:44.80px;height:15.42px;background:#4568d4"></div>
<div class="a" style="left:381.70px;top:93.59px;width:44.80px;height:0.8px;background:rgba(0,0,0,0.28)"></div>
<div class="t" style="left:294.10px;top:79.37px;height:15.42px;line-height:15.42px;">54</div>
<div class="t" style="left:314.20px;top:79.37px;height:15.42px;line-height:15.42px;">Dino Deep Blue</div>
<div class="x" style="left:382.20px;width:44.80px;top:80.37px;height:15.42px;line-height:15.42px;text-shadow:0.4px 0.4px 0.6px #000">#4568d4</div>
<div class="a" style="left:291.70px;top:109.20px;width:90.00px;height:0.8px;background:#051219"></div>
<div class="a" style="left:381.70px;top:94.38px;width:44.80px;height:15.42px;background:#e2e2e2"></div>
<div class="a" style="left:381.70px;top:109.00px;width:44.80px;height:0.8px;background:rgba(0,0,0,0.28)"></div>
<div class="t" style="left:294.10px;top:94.78px;height:15.42px;line-height:15.42px;">55</div>
<div class="t" style="left:314.20px;top:94.78px;height:15.42px;line-height:15.42px;">NearWhite</div>
<div class="x" style="left:382.20px;width:44.80px;top:95.78px;height:15.42px;line-height:15.42px;color:#f6f6f6;text-shadow:0 0 1px #000,0 0 1.5px #000,0 0 2px rgba(0,0,0,0.6)">#e2e2e2</div>
<div class="a" style="left:291.70px;top:124.62px;width:90.00px;height:0.8px;background:#051219"></div>
<div class="a" style="left:381.70px;top:109.80px;width:44.80px;height:15.42px;background:#515151"></div>
<div class="a" style="left:381.70px;top:124.42px;width:44.80px;height:0.8px;background:rgba(0,0,0,0.28)"></div>
<div class="t" style="left:294.10px;top:110.20px;height:15.42px;line-height:15.42px;">56</div>
<div class="t" style="left:314.20px;top:110.20px;height:15.42px;line-height:15.42px;">NearBlack</div>
<div class="x" style="left:382.20px;width:44.80px;top:111.20px;height:15.42px;line-height:15.42px;text-shadow:0.4px 0.4px 0.6px #000">#515151</div>
<div class="a" style="left:291.70px;top:140.04px;width:90.00px;height:0.8px;background:#051219"></div>
<div class="a" style="left:381.70px;top:125.22px;width:44.80px;height:15.42px;background:#184546"></div>
<div class="a" style="left:381.70px;top:139.84px;width:44.80px;height:0.8px;background:rgba(0,0,0,0.28)"></div>
<div class="t" style="left:294.10px;top:125.62px;height:15.42px;line-height:15.42px;">57</div>
<div class="t" style="left:314.20px;top:125.62px;height:15.42px;line-height:15.42px;">Dark Turquoise</div>
<div class="x" style="left:382.20px;width:44.80px;top:126.62px;height:15.42px;line-height:15.42px;text-shadow:0.4px 0.4px 0.6px #000">#184546</div>
<div class="a" style="left:291.70px;top:155.45px;width:90.00px;height:0.8px;background:#051219"></div>
<div class="a" style="left:381.70px;top:140.64px;width:44.80px;height:15.42px;background:#007060"></div>
<div class="a" style="left:381.70px;top:155.25px;width:44.80px;height:0.8px;background:rgba(0,0,0,0.28)"></div>
<div class="t" style="left:294.10px;top:141.04px;height:15.42px;line-height:15.42px;">58</div>
<div class="t" style="left:314.20px;top:141.04px;height:15.42px;line-height:15.42px;">Medium Turquoise</div>
<div class="x" style="left:382.20px;width:44.80px;top:142.04px;height:15.42px;line-height:15.42px;text-shadow:0.4px 0.4px 0.6px #000">#OO7O6O</div>
<div class="a" style="left:291.70px;top:170.87px;width:90.00px;height:0.8px;background:#051219"></div>
<div class="a" style="left:381.70px;top:156.05px;width:44.80px;height:15.42px;background:#00c5ab"></div>
<div class="a" style="left:381.70px;top:170.67px;width:44.80px;height:0.8px;background:rgba(0,0,0,0.28)"></div>
<div class="t" style="left:294.10px;top:156.45px;height:15.42px;line-height:15.42px;">59</div>
<div class="t" style="left:314.20px;top:156.45px;height:15.42px;line-height:15.42px;">Turquoise</div>
<div class="x" style="left:382.20px;width:44.80px;top:157.45px;height:15.42px;line-height:15.42px;text-shadow:0.4px 0.4px 0.6px #000">#OOc5ab</div>
<div class="a" style="left:291.70px;top:186.29px;width:90.00px;height:0.8px;background:#051219"></div>
<div class="a" style="left:381.70px;top:171.47px;width:44.80px;height:15.42px;background:#40594c"></div>
<div class="a" style="left:381.70px;top:186.09px;width:44.80px;height:0.8px;background:rgba(0,0,0,0.28)"></div>
<div class="t" style="left:294.10px;top:171.87px;height:15.42px;line-height:15.42px;">60</div>
<div class="t" style="left:314.20px;top:171.87px;height:15.42px;line-height:15.42px;">Green Slate</div>
<div class="x" style="left:382.20px;width:44.80px;top:172.87px;height:15.42px;line-height:15.42px;text-shadow:0.4px 0.4px 0.6px #000">#4O594c</div>
<div class="a" style="left:291.70px;top:201.70px;width:90.00px;height:0.8px;background:#051219"></div>
<div class="a" style="left:381.70px;top:186.89px;width:44.80px;height:15.42px;background:#3e4f40"></div>
<div class="a" style="left:381.70px;top:201.50px;width:44.80px;height:0.8px;background:rgba(0,0,0,0.28)"></div>
<div class="t" style="left:294.10px;top:187.29px;height:15.42px;line-height:15.42px;">61</div>
<div class="t" style="left:314.20px;top:187.29px;height:15.42px;line-height:15.42px;">Sage</div>
<div class="x" style="left:382.20px;width:44.80px;top:188.29px;height:15.42px;line-height:15.42px;text-shadow:0.4px 0.4px 0.6px #000">#3e4f4O</div>
<div class="a" style="left:291.70px;top:217.12px;width:90.00px;height:0.8px;background:#051219"></div>
<div class="a" style="left:381.70px;top:202.30px;width:44.80px;height:15.42px;background:#3b3938"></div>
<div class="a" style="left:381.70px;top:216.92px;width:44.80px;height:0.8px;background:rgba(0,0,0,0.28)"></div>
<div class="t" style="left:294.10px;top:202.70px;height:15.42px;line-height:15.42px;">62</div>
<div class="t" style="left:314.20px;top:202.70px;height:15.42px;line-height:15.42px;">Dark Warm Gray</div>
<div class="x" style="left:382.20px;width:44.80px;top:203.70px;height:15.42px;line-height:15.42px;text-shadow:0.4px 0.4px 0.6px #000">#3b3938</div>
<div class="a" style="left:291.70px;top:232.54px;width:90.00px;height:0.8px;background:#051219"></div>
<div class="a" style="left:381.70px;top:217.72px;width:44.80px;height:15.42px;background:#585553"></div>
<div class="a" style="left:381.70px;top:232.34px;width:44.80px;height:0.8px;background:rgba(0,0,0,0.28)"></div>
<div class="t" style="left:294.10px;top:218.12px;height:15.42px;line-height:15.42px;">63</div>
<div class="t" style="left:314.20px;top:218.12px;height:15.42px;line-height:15.42px;">Medium Warm Gray</div>
<div class="x" style="left:382.20px;width:44.80px;top:219.12px;height:15.42px;line-height:15.42px;text-shadow:0.4px 0.4px 0.6px #000">#585553</div>
<div class="a" style="left:291.70px;top:247.96px;width:90.00px;height:0.8px;background:#051219"></div>
<div class="a" style="left:381.70px;top:233.14px;width:44.80px;height:15.42px;background:#a29d9a"></div>
<div class="a" style="left:381.70px;top:247.75px;width:44.80px;height:0.8px;background:rgba(0,0,0,0.28)"></div>
<div class="t" style="left:294.10px;top:233.54px;height:15.42px;line-height:15.42px;">64</div>
<div class="t" style="left:314.20px;top:233.54px;height:15.42px;line-height:15.42px;">Light Warm Gray</div>
<div class="x" style="left:382.20px;width:44.80px;top:234.54px;height:15.42px;line-height:15.42px;color:#f6f6f6;text-shadow:0 0 1px #000,0 0 1.5px #000,0 0 2px rgba(0,0,0,0.6)">#a29d9a</div>
<div class="a" style="left:291.70px;top:263.37px;width:90.00px;height:0.8px;background:#051219"></div>
<div class="a" style="left:381.70px;top:248.56px;width:44.80px;height:15.42px;background:#525b56"></div>
<div class="a" style="left:381.70px;top:263.17px;width:44.80px;height:0.8px;background:rgba(0,0,0,0.28)"></div>
<div class="t" style="left:294.10px;top:248.96px;height:15.42px;line-height:15.42px;">65</div>
<div class="t" style="left:314.20px;top:248.96px;height:15.42px;line-height:15.42px;">Dark Cement</div>
<div class="x" style="left:382.20px;width:44.80px;top:249.96px;height:15.42px;line-height:15.42px;text-shadow:0.4px 0.4px 0.6px #000">#525b56</div>
<div class="a" style="left:291.70px;top:278.79px;width:90.00px;height:0.8px;background:#051219"></div>
<div class="a" style="left:381.70px;top:263.97px;width:44.80px;height:15.42px;background:#8aa198"></div>
<div class="a" style="left:381.70px;top:278.59px;width:44.80px;height:0.8px;background:rgba(0,0,0,0.28)"></div>
<div class="t" style="left:294.10px;top:264.37px;height:15.42px;line-height:15.42px;">66</div>
<div class="t" style="left:314.20px;top:264.37px;height:15.42px;line-height:15.42px;">Light Cement</div>
<div class="x" style="left:382.20px;width:44.80px;top:265.37px;height:15.42px;line-height:15.42px;color:#f6f6f6;text-shadow:0 0 1px #000,0 0 1.5px #000,0 0 2px rgba(0,0,0,0.6)">#8aa198</div>
<div class="a" style="left:291.70px;top:294.21px;width:90.00px;height:0.8px;background:#051219"></div>
<div class="a" style="left:381.70px;top:279.39px;width:44.80px;height:15.42px;background:#e8b4ff"></div>
<div class="a" style="left:381.70px;top:294.01px;width:44.80px;height:0.8px;background:rgba(0,0,0,0.28)"></div>
<div class="t" style="left:294.10px;top:279.79px;height:15.42px;line-height:15.42px;">67</div>
<div class="t" style="left:314.20px;top:279.79px;height:15.42px;line-height:15.42px;">Light Pink</div>
<div class="x" style="left:382.20px;width:44.80px;top:280.79px;height:15.42px;line-height:15.42px;color:#f6f6f6;text-shadow:0 0 1px #000,0 0 1.5px #000,0 0 2px rgba(0,0,0,0.6)">#e8b4ff</div>
<div class="a" style="left:291.70px;top:309.62px;width:90.00px;height:0.8px;background:#051219"></div>
<div class="a" style="left:381.70px;top:294.81px;width:44.80px;height:15.42px;background:#ff119a"></div>
<div class="a" style="left:381.70px;top:309.42px;width:44.80px;height:0.8px;background:rgba(0,0,0,0.28)"></div>
<div class="t" style="left:294.10px;top:295.21px;height:15.42px;line-height:15.42px;">68</div>
<div class="t" style="left:314.20px;top:295.21px;height:15.42px;line-height:15.42px;">Deep Pink</div>
<div class="x" style="left:382.20px;width:44.80px;top:296.21px;height:15.42px;line-height:15.42px;text-shadow:0.4px 0.4px 0.6px #000">#ff119a</div>
<div class="a" style="left:291.70px;top:325.04px;width:90.00px;height:0.8px;background:#051219"></div>
<div class="a" style="left:381.70px;top:310.22px;width:44.80px;height:15.42px;background:#730046"></div>
<div class="a" style="left:381.70px;top:324.84px;width:44.80px;height:0.8px;background:rgba(0,0,0,0.28)"></div>
<div class="t" style="left:294.10px;top:310.62px;height:15.42px;line-height:15.42px;">69</div>
<div class="t" style="left:314.20px;top:310.62px;height:15.42px;line-height:15.42px;">Dark Violet</div>
<div class="x" style="left:382.20px;width:44.80px;top:311.62px;height:15.42px;line-height:15.42px;text-shadow:0.4px 0.4px 0.6px #000">#73OO46</div>
<div class="a" style="left:291.70px;top:340.46px;width:90.00px;height:0.8px;background:#051219"></div>
<div class="a" style="left:381.70px;top:325.64px;width:44.80px;height:15.42px;background:#b70042"></div>
<div class="a" style="left:381.70px;top:340.26px;width:44.80px;height:0.8px;background:rgba(0,0,0,0.28)"></div>
<div class="t" style="left:294.10px;top:326.04px;height:15.42px;line-height:15.42px;">70</div>
<div class="t" style="left:314.20px;top:326.04px;height:15.42px;line-height:15.42px;">Dark Magenta</div>
<div class="x" style="left:382.20px;width:44.80px;top:327.04px;height:15.42px;line-height:15.42px;text-shadow:0.4px 0.4px 0.6px #000">#b7OO42</div>
<div class="a" style="left:291.70px;top:355.87px;width:90.00px;height:0.8px;background:#051219"></div>
<div class="a" style="left:381.70px;top:341.06px;width:44.80px;height:15.42px;background:#7e331e"></div>
<div class="a" style="left:381.70px;top:355.67px;width:44.80px;height:0.8px;background:rgba(0,0,0,0.28)"></div>
<div class="t" style="left:294.10px;top:341.46px;height:15.42px;line-height:15.42px;">71</div>
<div class="t" style="left:314.20px;top:341.46px;height:15.42px;line-height:15.42px;">Burnt Sienna</div>
<div class="x" style="left:382.20px;width:44.80px;top:342.46px;height:15.42px;line-height:15.42px;text-shadow:0.4px 0.4px 0.6px #000">#7e331e</div>
<div class="a" style="left:291.70px;top:371.29px;width:90.00px;height:0.8px;background:#051219"></div>
<div class="a" style="left:381.70px;top:356.47px;width:44.80px;height:15.42px;background:#a93000"></div>
<div class="a" style="left:381.70px;top:371.09px;width:44.80px;height:0.8px;background:rgba(0,0,0,0.28)"></div>
<div class="t" style="left:294.10px;top:356.87px;height:15.42px;line-height:15.42px;">72</div>
<div class="t" style="left:314.20px;top:356.87px;height:15.42px;line-height:15.42px;">Medium Autumn</div>
<div class="x" style="left:382.20px;width:44.80px;top:357.87px;height:15.42px;line-height:15.42px;text-shadow:0.4px 0.4px 0.6px #000">#a93OOO</div>
<div class="a" style="left:291.70px;top:386.71px;width:90.00px;height:0.8px;background:#051219"></div>
<div class="a" style="left:381.70px;top:371.89px;width:44.80px;height:15.42px;background:#ef3100"></div>
<div class="a" style="left:381.70px;top:386.51px;width:44.80px;height:0.8px;background:rgba(0,0,0,0.28)"></div>
<div class="t" style="left:294.10px;top:372.29px;height:15.42px;line-height:15.42px;">73</div>
<div class="t" style="left:314.20px;top:372.29px;height:15.42px;line-height:15.42px;">Vermillion</div>
<div class="x" style="left:382.20px;width:44.80px;top:373.29px;height:15.42px;line-height:15.42px;text-shadow:0.4px 0.4px 0.6px #000">#ef31OO</div>
<div class="a" style="left:291.70px;top:402.12px;width:90.00px;height:0.8px;background:#051219"></div>
<div class="a" style="left:381.70px;top:387.31px;width:44.80px;height:15.42px;background:#ff5834"></div>
<div class="a" style="left:381.70px;top:401.92px;width:44.80px;height:0.8px;background:rgba(0,0,0,0.28)"></div>
<div class="t" style="left:294.10px;top:387.71px;height:15.42px;line-height:15.42px;">74</div>
<div class="t" style="left:314.20px;top:387.71px;height:15.42px;line-height:15.42px;">Coral</div>
<div class="x" style="left:382.20px;width:44.80px;top:388.71px;height:15.42px;line-height:15.42px;text-shadow:0.4px 0.4px 0.6px #000">#ff5834</div>
<div class="a" style="left:291.70px;top:4.2px;width:134.80px;height:13.10px;background:#020609;border-top:1px solid #22404c"></div>
<div class="a" style="left:291.70px;top:16.70px;width:134.80px;height:1px;background:#1c313a"></div>
<div class="h" style="left:294.70px;top:7.30px;height:10px;line-height:10px;">ID</div>
<div class="h" style="left:311.00px;top:7.30px;height:10px;line-height:10px;width:63.50px;text-align:center;transform-origin:50% 50%;">Description</div>
<div class="h" style="left:384.20px;top:7.30px;height:10px;line-height:10px;">Hex Code</div>
<div class="dot" style="left:304.90px;top:9.9px"></div>
<div class="dot" style="left:375.60px;top:9.9px"></div>
<div class="dot" style="left:420.40px;top:9.9px"></div>
<div class="a" style="left:311.00px;top:4.7px;width:1px;height:12.60px;background:#16262e"></div>
<div class="a" style="left:381.70px;top:4.7px;width:1px;height:12.60px;background:#16262e"></div>
<div class="a" style="left:426.50px;top:0px;width:1px;height:17.30px;background:#587a8c"></div>
<div class="a" style="left:426.50px;top:17.30px;width:1px;height:385.43px;background:rgba(140,170,190,0.32)"></div>
<div class="a" style="left:440.00px;top:4.7px;width:134.80px;height:395.88px;background:#081a24"></div>
<div class="a" style="left:459.30px;top:17.60px;width:0.8px;height:382.98px;background:#0f1f27"></div>
<div class="a" style="left:528.40px;top:17.60px;width:0.9px;height:382.98px;background:#040c10"></div>
<div class="a" style="left:440.00px;top:31.73px;width:89.20px;height:0.8px;background:#051219"></div>
<div class="a" style="left:529.20px;top:17.60px;width:45.60px;height:14.73px;background:#ff7f00"></div>
<div class="a" style="left:529.20px;top:31.53px;width:45.60px;height:0.8px;background:rgba(0,0,0,0.28)"></div>
<div class="t" style="left:441.80px;top:19.40px;height:14.73px;line-height:14.73px;">75</div>
<div class="t" style="left:461.90px;top:19.40px;height:14.73px;line-height:14.73px;">Orange</div>
<div class="x" style="left:529.70px;width:45.60px;top:19.00px;height:14.73px;line-height:14.73px;color:#f6f6f6;text-shadow:0 0 1px #000,0 0 1.5px #000,0 0 2px rgba(0,0,0,0.6)">#ff7fOO</div>
<div class="a" style="left:440.00px;top:46.46px;width:89.20px;height:0.8px;background:#051219"></div>
<div class="a" style="left:529.20px;top:32.33px;width:45.60px;height:14.73px;background:#ffa33b"></div>
<div class="a" style="left:529.20px;top:46.26px;width:45.60px;height:0.8px;background:rgba(0,0,0,0.28)"></div>
<div class="t" style="left:441.80px;top:34.13px;height:14.73px;line-height:14.73px;">76</div>
<div class="t" style="left:461.90px;top:34.13px;height:14.73px;line-height:14.73px;">Peach</div>
<div class="x" style="left:529.70px;width:45.60px;top:33.73px;height:14.73px;line-height:14.73px;color:#f6f6f6;text-shadow:0 0 1px #000,0 0 1.5px #000,0 0 2px rgba(0,0,0,0.6)">#ffa33b</div>
<div class="a" style="left:440.00px;top:61.19px;width:89.20px;height:0.8px;background:#051219"></div>
<div class="a" style="left:529.20px;top:47.06px;width:45.60px;height:14.73px;background:#ae7000"></div>
<div class="a" style="left:529.20px;top:60.99px;width:45.60px;height:0.8px;background:rgba(0,0,0,0.28)"></div>
<div class="t" style="left:441.80px;top:48.86px;height:14.73px;line-height:14.73px;">77</div>
<div class="t" style="left:461.90px;top:48.86px;height:14.73px;line-height:14.73px;">Light Autumn</div>
<div class="x" style="left:529.70px;width:45.60px;top:48.46px;height:14.73px;line-height:14.73px;text-shadow:0.4px 0.4px 0.6px #000">#ae7OOO</div>
<div class="a" style="left:440.00px;top:75.92px;width:89.20px;height:0.8px;background:#051219"></div>
<div class="a" style="left:529.20px;top:61.79px;width:45.60px;height:14.73px;background:#949428"></div>
<div class="a" style="left:529.20px;top:75.72px;width:45.60px;height:0.8px;background:rgba(0,0,0,0.28)"></div>
<div class="t" style="left:441.80px;top:63.59px;height:14.73px;line-height:14.73px;">78</div>
<div class="t" style="left:461.90px;top:63.59px;height:14.73px;line-height:14.73px;">Mustard</div>
<div class="x" style="left:529.70px;width:45.60px;top:63.19px;height:14.73px;line-height:14.73px;text-shadow:0.4px 0.4px 0.6px #000">#949428</div>
<div class="a" style="left:440.00px;top:90.65px;width:89.20px;height:0.8px;background:#051219"></div>
<div class="a" style="left:529.20px;top:76.52px;width:45.60px;height:14.73px;background:#000000"></div>
<div class="a" style="left:529.20px;top:90.45px;width:45.60px;height:0.8px;background:rgba(0,0,0,0.28)"></div>
<div class="t" style="left:441.80px;top:78.32px;height:14.73px;line-height:14.73px;">79</div>
<div class="t" style="left:461.90px;top:78.32px;height:14.73px;line-height:14.73px;">Actual Black</div>
<div class="x" style="left:529.70px;width:45.60px;top:77.92px;height:14.73px;line-height:14.73px;text-shadow:0.4px 0.4px 0.6px #000">#OOOOOO</div>
<div class="a" style="left:440.00px;top:105.38px;width:89.20px;height:0.8px;background:#051219"></div>
<div class="a" style="left:529.20px;top:91.25px;width:45.60px;height:14.73px;background:#190a36"></div>
<div class="a" style="left:529.20px;top:105.18px;width:45.60px;height:0.8px;background:rgba(0,0,0,0.28)"></div>
<div class="t" style="left:441.80px;top:93.05px;height:14.73px;line-height:14.73px;">80</div>
<div class="t" style="left:461.90px;top:93.05px;height:14.73px;line-height:14.73px;">Midnight Blue</div>
<div class="x" style="left:529.70px;width:45.60px;top:92.65px;height:14.73px;line-height:14.73px;text-shadow:0.4px 0.4px 0.6px #000">#19Oa36</div>
<div class="a" style="left:440.00px;top:120.11px;width:89.20px;height:0.8px;background:#051219"></div>
<div class="a" style="left:529.20px;top:105.98px;width:45.60px;height:14.73px;background:#152b39"></div>
<div class="a" style="left:529.20px;top:119.91px;width:45.60px;height:0.8px;background:rgba(0,0,0,0.28)"></div>
<div class="t" style="left:441.80px;top:107.78px;height:14.73px;line-height:14.73px;">81</div>
<div class="t" style="left:461.90px;top:107.78px;height:14.73px;line-height:14.73px;">Dark Blue</div>
<div class="x" style="left:529.70px;width:45.60px;top:107.38px;height:14.73px;line-height:14.73px;text-shadow:0.4px 0.4px 0.6px #000">#152b39</div>
<div class="a" style="left:440.00px;top:134.84px;width:89.20px;height:0.8px;background:#051219"></div>
<div class="a" style="left:529.20px;top:120.71px;width:45.60px;height:14.73px;background:#302531"></div>
<div class="a" style="left:529.20px;top:134.64px;width:45.60px;height:0.8px;background:rgba(0,0,0,0.28)"></div>
<div class="t" style="left:441.80px;top:122.51px;height:14.73px;line-height:14.73px;">82</div>
<div class="t" style="left:461.90px;top:122.51px;height:14.73px;line-height:14.73px;">Black Sands</div>
<div class="x" style="left:529.70px;width:45.60px;top:122.11px;height:14.73px;line-height:14.73px;text-shadow:0.4px 0.4px 0.6px #000">#3O2531</div>
<div class="a" style="left:440.00px;top:149.57px;width:89.20px;height:0.8px;background:#051219"></div>
<div class="a" style="left:529.20px;top:135.44px;width:45.60px;height:14.73px;background:#adff4f"></div>
<div class="a" style="left:529.20px;top:149.37px;width:45.60px;height:0.8px;background:rgba(0,0,0,0.28)"></div>
<div class="t" style="left:441.80px;top:137.24px;height:14.73px;line-height:14.73px;">83</div>
<div class="t" style="left:461.90px;top:137.24px;height:14.73px;line-height:14.73px;">Lemon Lime</div>
<div class="x" style="left:529.70px;width:45.60px;top:136.84px;height:14.73px;line-height:14.73px;color:#f6f6f6;text-shadow:0 0 1px #000,0 0 1.5px #000,0 0 2px rgba(0,0,0,0.6)">#adff4f</div>
<div class="a" style="left:440.00px;top:164.30px;width:89.20px;height:0.8px;background:#051219"></div>
<div class="a" style="left:529.20px;top:150.17px;width:45.60px;height:14.73px;background:#3ce887"></div>
<div class="a" style="left:529.20px;top:164.10px;width:45.60px;height:0.8px;background:rgba(0,0,0,0.28)"></div>
<div class="t" style="left:441.80px;top:151.97px;height:14.73px;line-height:14.73px;">84</div>
<div class="t" style="left:461.90px;top:151.97px;height:14.73px;line-height:14.73px;">Mint</div>
<div class="x" style="left:529.70px;width:45.60px;top:151.57px;height:14.73px;line-height:14.73px;color:#f6f6f6;text-shadow:0 0 1px #000,0 0 1.5px #000,0 0 2px rgba(0,0,0,0.6)">#3ce887</div>
<div class="a" style="left:440.00px;top:179.03px;width:89.20px;height:0.8px;background:#051219"></div>
<div class="a" style="left:529.20px;top:164.90px;width:45.60px;height:14.73px;background:#008840"></div>
<div class="a" style="left:529.20px;top:178.83px;width:45.60px;height:0.8px;background:rgba(0,0,0,0.28)"></div>
<div class="t" style="left:441.80px;top:166.70px;height:14.73px;line-height:14.73px;">85</div>
<div class="t" style="left:461.90px;top:166.70px;height:14.73px;line-height:14.73px;">Jade</div>
<div class="x" style="left:529.70px;width:45.60px;top:166.30px;height:14.73px;line-height:14.73px;text-shadow:0.4px 0.4px 0.6px #000">#OO884O</div>
<div class="a" style="left:440.00px;top:193.76px;width:89.20px;height:0.8px;background:#051219"></div>
<div class="a" style="left:529.20px;top:179.63px;width:45.60px;height:14.73px;background:#0f552e"></div>
<div class="a" style="left:529.20px;top:193.56px;width:45.60px;height:0.8px;background:rgba(0,0,0,0.28)"></div>
<div class="t" style="left:441.80px;top:181.43px;height:14.73px;line-height:14.73px;">86</div>
<div class="t" style="left:461.90px;top:181.43px;height:14.73px;line-height:14.73px;">Pine Green</div>
<div class="x" style="left:529.70px;width:45.60px;top:181.03px;height:14.73px;line-height:14.73px;text-shadow:0.4px 0.4px 0.6px #000">#Of552e</div>
<div class="a" style="left:440.00px;top:208.49px;width:89.20px;height:0.8px;background:#051219"></div>
<div class="a" style="left:529.20px;top:194.36px;width:45.60px;height:14.73px;background:#005b45"></div>
<div class="a" style="left:529.20px;top:208.29px;width:45.60px;height:0.8px;background:rgba(0,0,0,0.28)"></div>
<div class="t" style="left:441.80px;top:196.16px;height:14.73px;line-height:14.73px;">87</div>
<div class="t" style="left:461.90px;top:196.16px;height:14.73px;line-height:14.73px;">Spruce Green</div>
<div class="x" style="left:529.70px;width:45.60px;top:195.76px;height:14.73px;line-height:14.73px;text-shadow:0.4px 0.4px 0.6px #000">#OO5b45</div>
<div class="a" style="left:440.00px;top:223.22px;width:89.20px;height:0.8px;background:#051219"></div>
<div class="a" style="left:529.20px;top:209.09px;width:45.60px;height:14.73px;background:#5b9724"></div>
<div class="a" style="left:529.20px;top:223.02px;width:45.60px;height:0.8px;background:rgba(0,0,0,0.28)"></div>
<div class="t" style="left:441.80px;top:210.89px;height:14.73px;line-height:14.73px;">88</div>
<div class="t" style="left:461.90px;top:210.89px;height:14.73px;line-height:14.73px;">Leaf Green</div>
<div class="x" style="left:529.70px;width:45.60px;top:210.49px;height:14.73px;line-height:14.73px;text-shadow:0.4px 0.4px 0.6px #000">#5b9724</div>
<div class="a" style="left:440.00px;top:237.95px;width:89.20px;height:0.8px;background:#051219"></div>
<div class="a" style="left:529.20px;top:223.82px;width:45.60px;height:14.73px;background:#5e275f"></div>
<div class="a" style="left:529.20px;top:237.75px;width:45.60px;height:0.8px;background:rgba(0,0,0,0.28)"></div>
<div class="t" style="left:441.80px;top:225.62px;height:14.73px;line-height:14.73px;">89</div>
<div class="t" style="left:461.90px;top:225.62px;height:14.73px;line-height:14.73px;">Dark Lavender</div>
<div class="x" style="left:529.70px;width:45.60px;top:225.22px;height:14.73px;line-height:14.73px;text-shadow:0.4px 0.4px 0.6px #000">#5e275f</div>
<div class="a" style="left:440.00px;top:252.68px;width:89.20px;height:0.8px;background:#051219"></div>
<div class="a" style="left:529.20px;top:238.55px;width:45.60px;height:14.73px;background:#853587"></div>
<div class="a" style="left:529.20px;top:252.48px;width:45.60px;height:0.8px;background:rgba(0,0,0,0.28)"></div>
<div class="t" style="left:441.80px;top:240.35px;height:14.73px;line-height:14.73px;">90</div>
<div class="t" style="left:461.90px;top:240.35px;height:14.73px;line-height:14.73px;">Medium Lavender</div>
<div class="x" style="left:529.70px;width:45.60px;top:239.95px;height:14.73px;line-height:14.73px;text-shadow:0.4px 0.4px 0.6px #000">#853587</div>
<div class="a" style="left:440.00px;top:267.41px;width:89.20px;height:0.8px;background:#051219"></div>
<div class="a" style="left:529.20px;top:253.28px;width:45.60px;height:14.73px;background:#bd77be"></div>
<div class="a" style="left:529.20px;top:267.21px;width:45.60px;height:0.8px;background:rgba(0,0,0,0.28)"></div>
<div class="t" style="left:441.80px;top:255.08px;height:14.73px;line-height:14.73px;">91</div>
<div class="t" style="left:461.90px;top:255.08px;height:14.73px;line-height:14.73px;">Lavender</div>
<div class="x" style="left:529.70px;width:45.60px;top:254.68px;height:14.73px;line-height:14.73px;text-shadow:0.4px 0.4px 0.6px #000">#bd77be</div>
<div class="a" style="left:440.00px;top:282.14px;width:89.20px;height:0.8px;background:#051219"></div>
<div class="a" style="left:529.20px;top:268.01px;width:45.60px;height:14.73px;background:#0e404a"></div>
<div class="a" style="left:529.20px;top:281.94px;width:45.60px;height:0.8px;background:rgba(0,0,0,0.28)"></div>
<div class="t" style="left:441.80px;top:269.81px;height:14.73px;line-height:14.73px;">92</div>
<div class="t" style="left:461.90px;top:269.81px;height:14.73px;line-height:14.73px;">Dark Teal</div>
<div class="x" style="left:529.70px;width:45.60px;top:269.41px;height:14.73px;line-height:14.73px;text-shadow:0.4px 0.4px 0.6px #000">#Oe4O4a</div>
<div class="a" style="left:440.00px;top:296.87px;width:89.20px;height:0.8px;background:#051219"></div>
<div class="a" style="left:529.20px;top:282.74px;width:45.60px;height:14.73px;background:#105563"></div>
<div class="a" style="left:529.20px;top:296.67px;width:45.60px;height:0.8px;background:rgba(0,0,0,0.28)"></div>
<div class="t" style="left:441.80px;top:284.54px;height:14.73px;line-height:14.73px;">93</div>
<div class="t" style="left:461.90px;top:284.54px;height:14.73px;line-height:14.73px;">Medium Teal</div>
<div class="x" style="left:529.70px;width:45.60px;top:284.14px;height:14.73px;line-height:14.73px;text-shadow:0.4px 0.4px 0.6px #000">#1O5563</div>
<div class="a" style="left:440.00px;top:311.60px;width:89.20px;height:0.8px;background:#051219"></div>
<div class="a" style="left:529.20px;top:297.47px;width:45.60px;height:14.73px;background:#14849c"></div>
<div class="a" style="left:529.20px;top:311.40px;width:45.60px;height:0.8px;background:rgba(0,0,0,0.28)"></div>
<div class="t" style="left:441.80px;top:299.27px;height:14.73px;line-height:14.73px;">94</div>
<div class="t" style="left:461.90px;top:299.27px;height:14.73px;line-height:14.73px;">Teal</div>
<div class="x" style="left:529.70px;width:45.60px;top:298.87px;height:14.73px;line-height:14.73px;text-shadow:0.4px 0.4px 0.6px #000">#14849c</div>
<div class="a" style="left:440.00px;top:326.33px;width:89.20px;height:0.8px;background:#051219"></div>
<div class="a" style="left:529.20px;top:312.20px;width:45.60px;height:14.73px;background:#82a7ff"></div>
<div class="a" style="left:529.20px;top:326.13px;width:45.60px;height:0.8px;background:rgba(0,0,0,0.28)"></div>
<div class="t" style="left:441.80px;top:314.00px;height:14.73px;line-height:14.73px;">95</div>
<div class="t" style="left:461.90px;top:314.00px;height:14.73px;line-height:14.73px;">Powder Blue</div>
<div class="x" style="left:529.70px;width:45.60px;top:313.60px;height:14.73px;line-height:14.73px;color:#f6f6f6;text-shadow:0 0 1px #000,0 0 1.5px #000,0 0 2px rgba(0,0,0,0.6)">#82a7ff</div>
<div class="a" style="left:440.00px;top:341.06px;width:89.20px;height:0.8px;background:#051219"></div>
<div class="a" style="left:529.20px;top:326.93px;width:45.60px;height:14.73px;background:#a8e4ff"></div>
<div class="a" style="left:529.20px;top:340.86px;width:45.60px;height:0.8px;background:rgba(0,0,0,0.28)"></div>
<div class="t" style="left:441.80px;top:328.73px;height:14.73px;line-height:14.73px;">96</div>
<div class="t" style="left:461.90px;top:328.73px;height:14.73px;line-height:14.73px;">Glacial</div>
<div class="x" style="left:529.70px;width:45.60px;top:328.33px;height:14.73px;line-height:14.73px;color:#f6f6f6;text-shadow:0 0 1px #000,0 0 1.5px #000,0 0 2px rgba(0,0,0,0.6)">#a8e4ff</div>
<div class="a" style="left:440.00px;top:355.79px;width:89.20px;height:0.8px;background:#051219"></div>
<div class="a" style="left:529.20px;top:341.66px;width:45.60px;height:14.73px;background:#505118"></div>
<div class="a" style="left:529.20px;top:355.59px;width:45.60px;height:0.8px;background:rgba(0,0,0,0.28)"></div>
<div class="t" style="left:441.80px;top:343.46px;height:14.73px;line-height:14.73px;">97</div>
<div class="t" style="left:461.90px;top:343.46px;height:14.73px;line-height:14.73px;">Cammo</div>
<div class="x" style="left:529.70px;width:45.60px;top:343.06px;height:14.73px;line-height:14.73px;text-shadow:0.4px 0.4px 0.6px #000">#5O5118</div>
<div class="a" style="left:440.00px;top:370.52px;width:89.20px;height:0.8px;background:#051219"></div>
<div class="a" style="left:529.20px;top:356.39px;width:45.60px;height:14.73px;background:#766e3f"></div>
<div class="a" style="left:529.20px;top:370.32px;width:45.60px;height:0.8px;background:rgba(0,0,0,0.28)"></div>
<div class="t" style="left:441.80px;top:358.19px;height:14.73px;line-height:14.73px;">98</div>
<div class="t" style="left:461.90px;top:358.19px;height:14.73px;line-height:14.73px;">Dry Moss</div>
<div class="x" style="left:529.70px;width:45.60px;top:357.79px;height:14.73px;line-height:14.73px;text-shadow:0.4px 0.4px 0.6px #000">#766e3f</div>
<div class="a" style="left:440.00px;top:385.25px;width:89.20px;height:0.8px;background:#051219"></div>
<div class="a" style="left:529.20px;top:371.12px;width:45.60px;height:14.73px;background:#d0c860"></div>
<div class="a" style="left:529.20px;top:385.05px;width:45.60px;height:0.8px;background:rgba(0,0,0,0.28)"></div>
<div class="t" style="left:441.80px;top:372.92px;height:14.73px;line-height:14.73px;">99</div>
<div class="t" style="left:461.90px;top:372.92px;height:14.73px;line-height:14.73px;">Custard</div>
<div class="x" style="left:529.70px;width:45.60px;top:372.52px;height:14.73px;line-height:14.73px;color:#f6f6f6;text-shadow:0 0 1px #000,0 0 1.5px #000,0 0 2px rgba(0,0,0,0.6)">#dOc86O</div>
<div class="a" style="left:440.00px;top:399.98px;width:89.20px;height:0.8px;background:#051219"></div>
<div class="a" style="left:529.20px;top:385.85px;width:45.60px;height:14.73px;background:#f4f4cc"></div>
<div class="a" style="left:529.20px;top:399.78px;width:45.60px;height:0.8px;background:rgba(0,0,0,0.28)"></div>
<div class="t" style="left:441.80px;top:387.65px;height:14.73px;line-height:14.73px;">100</div>
<div class="t" style="left:461.90px;top:387.65px;height:14.73px;line-height:14.73px;">Cream</div>
<div class="x" style="left:529.70px;width:45.60px;top:387.25px;height:14.73px;line-height:14.73px;color:#f6f6f6;text-shadow:0 0 1px #000,0 0 1.5px #000,0 0 2px rgba(0,0,0,0.6)">#f4f4cc</div>
<div class="a" style="left:440.00px;top:4.2px;width:134.80px;height:13.40px;background:#020609;border-top:1px solid #22404c"></div>
<div class="a" style="left:440.00px;top:17.00px;width:134.80px;height:1px;background:#1c313a"></div>
<div class="h" style="left:443.00px;top:7.30px;height:10px;line-height:10px;">ID</div>
<div class="h" style="left:459.30px;top:7.30px;height:10px;line-height:10px;width:62.70px;text-align:center;transform-origin:50% 50%;">Description</div>
<div class="h" style="left:531.70px;top:7.30px;height:10px;line-height:10px;">Hex Code</div>
<div class="dot" style="left:453.20px;top:9.9px"></div>
<div class="dot" style="left:523.10px;top:9.9px"></div>
<div class="dot" style="left:568.70px;top:9.9px"></div>
<div class="a" style="left:459.30px;top:4.7px;width:1px;height:12.90px;background:#16262e"></div>
<div class="a" style="left:529.20px;top:4.7px;width:1px;height:12.90px;background:#16262e"></div>
<div class="a" style="left:574.80px;top:0px;width:1px;height:17.60px;background:#587a8c"></div>
<div class="a" style="left:574.80px;top:17.60px;width:1px;height:382.98px;background:#061820"></div>
<div class="a" style="left:588.30px;top:4.7px;width:133.70px;height:397.38px;background:#081a24"></div>
<div class="a" style="left:607.80px;top:13.90px;width:0.8px;height:388.18px;background:#0f1f27"></div>
<div class="a" style="left:676.20px;top:13.90px;width:0.9px;height:388.18px;background:#040c10"></div>
<div class="a" style="left:588.30px;top:28.23px;width:88.70px;height:0.8px;background:#051219"></div>
<div class="a" style="left:677.00px;top:13.90px;width:45.00px;height:14.93px;background:#1f1f1f"></div>
<div class="a" style="left:677.00px;top:28.03px;width:45.00px;height:0.8px;background:rgba(0,0,0,0.28)"></div>
<div class="t" style="left:590.10px;top:15.10px;height:14.93px;line-height:14.93px;">201</div>
<div class="t" style="left:610.40px;top:15.10px;height:14.93px;line-height:14.93px;">Black Dye<span class="sup">1</span></div>
<div class="x" style="left:677.50px;width:45.00px;top:14.50px;height:14.93px;line-height:14.93px;text-shadow:0.4px 0.4px 0.6px #000">#1f1f1f</div>
<div class="a" style="left:588.30px;top:43.16px;width:88.70px;height:0.8px;background:#051219"></div>
<div class="a" style="left:677.00px;top:28.83px;width:45.00px;height:14.93px;background:#0000ff"></div>
<div class="a" style="left:677.00px;top:42.96px;width:45.00px;height:0.8px;background:rgba(0,0,0,0.28)"></div>
<div class="t" style="left:590.10px;top:30.03px;height:14.93px;line-height:14.93px;">202</div>
<div class="t" style="left:610.40px;top:30.03px;height:14.93px;line-height:14.93px;">Blue Dye<span class="sup">1</span></div>
<div class="x" style="left:677.50px;width:45.00px;top:29.43px;height:14.93px;line-height:14.93px;text-shadow:0.4px 0.4px 0.6px #000">#OOOOff</div>
<div class="a" style="left:588.30px;top:58.09px;width:88.70px;height:0.8px;background:#051219"></div>
<div class="a" style="left:677.00px;top:43.76px;width:45.00px;height:14.93px;background:#756147"></div>
<div class="a" style="left:677.00px;top:57.89px;width:45.00px;height:0.8px;background:rgba(0,0,0,0.28)"></div>
<div class="t" style="left:590.10px;top:44.96px;height:14.93px;line-height:14.93px;">203</div>
<div class="t" style="left:610.40px;top:44.96px;height:14.93px;line-height:14.93px;">Brown Dye<span class="sup">1</span></div>
<div class="x" style="left:677.50px;width:45.00px;top:44.36px;height:14.93px;line-height:14.93px;text-shadow:0.4px 0.4px 0.6px #000">#756147</div>
<div class="a" style="left:588.30px;top:73.02px;width:88.70px;height:0.8px;background:#051219"></div>
<div class="a" style="left:677.00px;top:58.69px;width:45.00px;height:14.93px;background:#00ffff"></div>
<div class="a" style="left:677.00px;top:72.82px;width:45.00px;height:0.8px;background:rgba(0,0,0,0.28)"></div>
<div class="t" style="left:590.10px;top:59.89px;height:14.93px;line-height:14.93px;">204</div>
<div class="t" style="left:610.40px;top:59.89px;height:14.93px;line-height:14.93px;">Cyan Dye<span class="sup">1</span></div>
<div class="x" style="left:677.50px;width:45.00px;top:59.29px;height:14.93px;line-height:14.93px;color:#f6f6f6;text-shadow:0 0 1px #000,0 0 1.5px #000,0 0 2px rgba(0,0,0,0.6)">#OOffff</div>
<div class="a" style="left:588.30px;top:87.95px;width:88.70px;height:0.8px;background:#051219"></div>
<div class="a" style="left:677.00px;top:73.62px;width:45.00px;height:14.93px;background:#006c00"></div>
<div class="a" style="left:677.00px;top:87.75px;width:45.00px;height:0.8px;background:rgba(0,0,0,0.28)"></div>
<div class="t" style="left:590.10px;top:74.82px;height:14.93px;line-height:14.93px;">205</div>
<div class="t" style="left:610.40px;top:74.82px;height:14.93px;line-height:14.93px;">Forest Dye<span class="sup">1</span></div>
<div class="x" style="left:677.50px;width:45.00px;top:74.22px;height:14.93px;line-height:14.93px;text-shadow:0.4px 0.4px 0.6px #000">#OO6cOO</div>
<div class="a" style="left:588.30px;top:102.88px;width:88.70px;height:0.8px;background:#051219"></div>
<div class="a" style="left:677.00px;top:88.55px;width:45.00px;height:14.93px;background:#00ff00"></div>
<div class="a" style="left:677.00px;top:102.68px;width:45.00px;height:0.8px;background:rgba(0,0,0,0.28)"></div>
<div class="t" style="left:590.10px;top:89.75px;height:14.93px;line-height:14.93px;">206</div>
<div class="t" style="left:610.40px;top:89.75px;height:14.93px;line-height:14.93px;">Green Dye<span class="sup">1</span></div>
<div class="x" style="left:677.50px;width:45.00px;top:89.15px;height:14.93px;line-height:14.93px;text-shadow:0.4px 0.4px 0.6px #000">#OOffOO</div>
<div class="a" style="left:588.30px;top:117.81px;width:88.70px;height:0.8px;background:#051219"></div>
<div class="a" style="left:677.00px;top:103.48px;width:45.00px;height:14.93px;background:#6c00ba"></div>
<div class="a" style="left:677.00px;top:117.61px;width:45.00px;height:0.8px;background:rgba(0,0,0,0.28)"></div>
<div class="t" style="left:590.10px;top:104.68px;height:14.93px;line-height:14.93px;">207</div>
<div class="t" style="left:610.40px;top:104.68px;height:14.93px;line-height:14.93px;">Purple Dye<span class="sup">1</span></div>
<div class="x" style="left:677.50px;width:45.00px;top:104.08px;height:14.93px;line-height:14.93px;text-shadow:0.4px 0.4px 0.6px #000">#6cOOba</div>
<div class="a" style="left:588.30px;top:132.74px;width:88.70px;height:0.8px;background:#051219"></div>
<div class="a" style="left:677.00px;top:118.41px;width:45.00px;height:14.93px;background:#ff8800"></div>
<div class="a" style="left:677.00px;top:132.54px;width:45.00px;height:0.8px;background:rgba(0,0,0,0.28)"></div>
<div class="t" style="left:590.10px;top:119.61px;height:14.93px;line-height:14.93px;">208</div>
<div class="t" style="left:610.40px;top:119.61px;height:14.93px;line-height:14.93px;">Orange Dye<span class="sup">1</span></div>
<div class="x" style="left:677.50px;width:45.00px;top:119.01px;height:14.93px;line-height:14.93px;color:#f6f6f6;text-shadow:0 0 1px #000,0 0 1.5px #000,0 0 2px rgba(0,0,0,0.6)">#ff88OO</div>
<div class="a" style="left:588.30px;top:147.67px;width:88.70px;height:0.8px;background:#051219"></div>
<div class="a" style="left:677.00px;top:133.34px;width:45.00px;height:14.93px;background:#ffffba"></div>
<div class="a" style="left:677.00px;top:147.47px;width:45.00px;height:0.8px;background:rgba(0,0,0,0.28)"></div>
<div class="t" style="left:590.10px;top:134.54px;height:14.93px;line-height:14.93px;">209</div>
<div class="t" style="left:610.40px;top:134.54px;height:14.93px;line-height:14.93px;">Parchment Dye<span class="sup">1</span></div>
<div class="x" style="left:677.50px;width:45.00px;top:133.94px;height:14.93px;line-height:14.93px;color:#f6f6f6;text-shadow:0 0 1px #000,0 0 1.5px #000,0 0 2px rgba(0,0,0,0.6)">#ffffba</div>
<div class="a" style="left:588.30px;top:162.60px;width:88.70px;height:0.8px;background:#051219"></div>
<div class="a" style="left:677.00px;top:148.27px;width:45.00px;height:14.93px;background:#ff7bd3"></div>
<div class="a" style="left:677.00px;top:162.40px;width:45.00px;height:0.8px;background:rgba(0,0,0,0.28)"></div>
<div class="t" style="left:590.10px;top:149.47px;height:14.93px;line-height:14.93px;">210</div>
<div class="t" style="left:610.40px;top:149.47px;height:14.93px;line-height:14.93px;">Pink Dye<span class="sup">1</span></div>
<div class="x" style="left:677.50px;width:45.00px;top:148.87px;height:14.93px;line-height:14.93px;color:#f6f6f6;text-shadow:0 0 1px #000,0 0 1.5px #000,0 0 2px rgba(0,0,0,0.6)">#ff7bd3</div>
<div class="a" style="left:588.30px;top:177.53px;width:88.70px;height:0.8px;background:#051219"></div>
<div class="a" style="left:677.00px;top:163.20px;width:45.00px;height:14.93px;background:#7b00e0"></div>
<div class="a" style="left:677.00px;top:177.33px;width:45.00px;height:0.8px;background:rgba(0,0,0,0.28)"></div>
<div class="t" style="left:590.10px;top:164.40px;height:14.93px;line-height:14.93px;">211</div>
<div class="t" style="left:610.40px;top:164.40px;height:14.93px;line-height:14.93px;">Unused Purple Dye<span class="sup">1</span></div>
<div class="x" style="left:677.50px;width:45.00px;top:163.80px;height:14.93px;line-height:14.93px;text-shadow:0.4px 0.4px 0.6px #000">#7bOOeO</div>
<div class="a" style="left:588.30px;top:192.46px;width:88.70px;height:0.8px;background:#051219"></div>
<div class="a" style="left:677.00px;top:178.13px;width:45.00px;height:14.93px;background:#ff0000"></div>
<div class="a" style="left:677.00px;top:192.26px;width:45.00px;height:0.8px;background:rgba(0,0,0,0.28)"></div>
<div class="t" style="left:590.10px;top:179.33px;height:14.93px;line-height:14.93px;">212</div>
<div class="t" style="left:610.40px;top:179.33px;height:14.93px;line-height:14.93px;">Red Dye<span class="sup">1</span></div>
<div class="x" style="left:677.50px;width:45.00px;top:178.73px;height:14.93px;line-height:14.93px;text-shadow:0.4px 0.4px 0.6px #000">#ffOOOO</div>
<div class="a" style="left:588.30px;top:207.39px;width:88.70px;height:0.8px;background:#051219"></div>
<div class="a" style="left:677.00px;top:193.06px;width:45.00px;height:14.93px;background:#7b00a8"></div>
<div class="a" style="left:677.00px;top:207.19px;width:45.00px;height:0.8px;background:rgba(0,0,0,0.28)"></div>
<div class="t" style="left:590.10px;top:194.26px;height:14.93px;line-height:14.93px;">213</div>
<div class="t" style="left:610.40px;top:194.26px;height:14.93px;line-height:14.93px;">Royalty Dye<span class="sup">1</span></div>
<div class="x" style="left:677.50px;width:45.00px;top:193.66px;height:14.93px;line-height:14.93px;text-shadow:0.4px 0.4px 0.6px #000">#7bOOa8</div>
<div class="a" style="left:588.30px;top:222.32px;width:88.70px;height:0.8px;background:#051219"></div>
<div class="a" style="left:677.00px;top:207.99px;width:45.00px;height:14.93px;background:#e1e1e1"></div>
<div class="a" style="left:677.00px;top:222.12px;width:45.00px;height:0.8px;background:rgba(0,0,0,0.28)"></div>
<div class="t" style="left:590.10px;top:209.19px;height:14.93px;line-height:14.93px;">214</div>
<div class="t" style="left:610.40px;top:209.19px;height:14.93px;line-height:14.93px;">Silver Dye<span class="sup">1</span></div>
<div class="x" style="left:677.50px;width:45.00px;top:208.59px;height:14.93px;line-height:14.93px;color:#f6f6f6;text-shadow:0 0 1px #000,0 0 1.5px #000,0 0 2px rgba(0,0,0,0.6)">#e1e1e1</div>
<div class="a" style="left:588.30px;top:237.25px;width:88.70px;height:0.8px;background:#051219"></div>
<div class="a" style="left:677.00px;top:222.92px;width:45.00px;height:14.93px;background:#bad5ff"></div>
<div class="a" style="left:677.00px;top:237.05px;width:45.00px;height:0.8px;background:rgba(0,0,0,0.28)"></div>
<div class="t" style="left:590.10px;top:224.12px;height:14.93px;line-height:14.93px;">215</div>
<div class="t" style="left:610.40px;top:224.12px;height:14.93px;line-height:14.93px;">Sky Dye<span class="sup">1</span></div>
<div class="x" style="left:677.50px;width:45.00px;top:223.52px;height:14.93px;line-height:14.93px;color:#f6f6f6;text-shadow:0 0 1px #000,0 0 1.5px #000,0 0 2px rgba(0,0,0,0.6)">#bad5ff</div>
<div class="a" style="left:588.30px;top:252.18px;width:88.70px;height:0.8px;background:#051219"></div>
<div class="a" style="left:677.00px;top:237.85px;width:45.00px;height:14.93px;background:#fbe08f"></div>
<div class="a" style="left:677.00px;top:251.98px;width:45.00px;height:0.8px;background:rgba(0,0,0,0.28)"></div>
<div class="t" style="left:590.10px;top:239.05px;height:14.93px;line-height:14.93px;">216</div>
<div class="t" style="left:610.40px;top:239.05px;height:14.93px;line-height:14.93px;">Tan Dye<span class="sup">1</span></div>
<div class="x" style="left:677.50px;width:45.00px;top:238.45px;height:14.93px;line-height:14.93px;color:#f6f6f6;text-shadow:0 0 1px #000,0 0 1.5px #000,0 0 2px rgba(0,0,0,0.6)">#fbeO8f</div>
<div class="a" style="left:588.30px;top:267.11px;width:88.70px;height:0.8px;background:#051219"></div>
<div class="a" style="left:677.00px;top:252.78px;width:45.00px;height:14.93px;background:#ad652c"></div>
<div class="a" style="left:677.00px;top:266.91px;width:45.00px;height:0.8px;background:rgba(0,0,0,0.28)"></div>
<div class="t" style="left:590.10px;top:253.98px;height:14.93px;line-height:14.93px;">217</div>
<div class="t" style="left:610.40px;top:253.98px;height:14.93px;line-height:14.93px;">Tangerine Dye<span class="sup">1</span></div>
<div class="x" style="left:677.50px;width:45.00px;top:253.38px;height:14.93px;line-height:14.93px;text-shadow:0.4px 0.4px 0.6px #000">#ad652c</div>
<div class="a" style="left:588.30px;top:282.04px;width:88.70px;height:0.8px;background:#051219"></div>
<div class="a" style="left:677.00px;top:267.71px;width:45.00px;height:14.93px;background:#ffffff"></div>
<div class="a" style="left:677.00px;top:281.84px;width:45.00px;height:0.8px;background:rgba(0,0,0,0.28)"></div>
<div class="t" style="left:590.10px;top:268.91px;height:14.93px;line-height:14.93px;">218</div>
<div class="t" style="left:610.40px;top:268.91px;height:14.93px;line-height:14.93px;">White Dye<span class="sup">1</span></div>
<div class="x" style="left:677.50px;width:45.00px;top:268.31px;height:14.93px;line-height:14.93px;color:#f6f6f6;text-shadow:0 0 1px #000,0 0 1.5px #000,0 0 2px rgba(0,0,0,0.6)">#ffffff</div>
<div class="a" style="left:588.30px;top:296.97px;width:88.70px;height:0.8px;background:#051219"></div>
<div class="a" style="left:677.00px;top:282.64px;width:45.00px;height:14.93px;background:#ffff00"></div>
<div class="a" style="left:677.00px;top:296.77px;width:45.00px;height:0.8px;background:rgba(0,0,0,0.28)"></div>
<div class="t" style="left:590.10px;top:283.84px;height:14.93px;line-height:14.93px;">219</div>
<div class="t" style="left:610.40px;top:283.84px;height:14.93px;line-height:14.93px;">Yellow Dye<span class="sup">1</span></div>
<div class="x" style="left:677.50px;width:45.00px;top:283.24px;height:14.93px;line-height:14.93px;color:#f6f6f6;text-shadow:0 0 1px #000,0 0 1.5px #000,0 0 2px rgba(0,0,0,0.6)">#ffffOO</div>
<div class="a" style="left:588.30px;top:311.90px;width:88.70px;height:0.8px;background:#051219"></div>
<div class="a" style="left:677.00px;top:297.57px;width:45.00px;height:14.93px;background:#e71fd9"></div>
<div class="a" style="left:677.00px;top:311.70px;width:45.00px;height:0.8px;background:rgba(0,0,0,0.28)"></div>
<div class="t" style="left:590.10px;top:298.77px;height:14.93px;line-height:14.93px;">220</div>
<div class="t" style="left:610.40px;top:298.77px;height:14.93px;line-height:14.93px;">Magenta Dye<span class="sup">1</span></div>
<div class="x" style="left:677.50px;width:45.00px;top:298.17px;height:14.93px;line-height:14.93px;text-shadow:0.4px 0.4px 0.6px #000">#e71fd9</div>
<div class="a" style="left:588.30px;top:326.83px;width:88.70px;height:0.8px;background:#051219"></div>
<div class="a" style="left:677.00px;top:312.50px;width:45.00px;height:14.93px;background:#94341f"></div>
<div class="a" style="left:677.00px;top:326.63px;width:45.00px;height:0.8px;background:rgba(0,0,0,0.28)"></div>
<div class="t" style="left:590.10px;top:313.70px;height:14.93px;line-height:14.93px;">221</div>
<div class="t" style="left:610.40px;top:313.70px;height:14.93px;line-height:14.93px;">Brick Dye<span class="sup">1</span></div>
<div class="x" style="left:677.50px;width:45.00px;top:313.10px;height:14.93px;line-height:14.93px;text-shadow:0.4px 0.4px 0.6px #000">#94341f</div>
<div class="a" style="left:588.30px;top:341.76px;width:88.70px;height:0.8px;background:#051219"></div>
<div class="a" style="left:677.00px;top:327.43px;width:45.00px;height:14.93px;background:#ff9600"></div>
<div class="a" style="left:677.00px;top:341.56px;width:45.00px;height:0.8px;background:rgba(0,0,0,0.28)"></div>
<div class="t" style="left:590.10px;top:328.63px;height:14.93px;line-height:14.93px;">222</div>
<div class="t" style="left:610.40px;top:328.63px;height:14.93px;line-height:14.93px;">Cantaloupe Dye<span class="sup">1</span></div>
<div class="x" style="left:677.50px;width:45.00px;top:328.03px;height:14.93px;line-height:14.93px;color:#f6f6f6;text-shadow:0 0 1px #000,0 0 1.5px #000,0 0 2px rgba(0,0,0,0.6)">#ff96OO</div>
<div class="a" style="left:588.30px;top:356.69px;width:88.70px;height:0.8px;background:#051219"></div>
<div class="a" style="left:677.00px;top:342.36px;width:45.00px;height:14.93px;background:#473b2b"></div>
<div class="a" style="left:677.00px;top:356.49px;width:45.00px;height:0.8px;background:rgba(0,0,0,0.28)"></div>
<div class="t" style="left:590.10px;top:343.56px;height:14.93px;line-height:14.93px;">223</div>
<div class="t" style="left:610.40px;top:343.56px;height:14.93px;line-height:14.93px;">Mud Dye<span class="sup">1</span></div>
<div class="x" style="left:677.50px;width:45.00px;top:342.96px;height:14.93px;line-height:14.93px;text-shadow:0.4px 0.4px 0.6px #000">#473b2b</div>
<div class="a" style="left:588.30px;top:371.62px;width:88.70px;height:0.8px;background:#051219"></div>
<div class="a" style="left:677.00px;top:357.29px;width:45.00px;height:14.93px;background:#34346c"></div>
<div class="a" style="left:677.00px;top:371.42px;width:45.00px;height:0.8px;background:rgba(0,0,0,0.28)"></div>
<div class="t" style="left:590.10px;top:358.49px;height:14.93px;line-height:14.93px;">224</div>
<div class="t" style="left:610.40px;top:358.49px;height:14.93px;line-height:14.93px;">Navy Dye<span class="sup">1</span></div>
<div class="x" style="left:677.50px;width:45.00px;top:357.89px;height:14.93px;line-height:14.93px;text-shadow:0.4px 0.4px 0.6px #000">#34346c</div>
<div class="a" style="left:588.30px;top:386.55px;width:88.70px;height:0.8px;background:#051219"></div>
<div class="a" style="left:677.00px;top:372.22px;width:45.00px;height:14.93px;background:#b5b65e"></div>
<div class="a" style="left:677.00px;top:386.35px;width:45.00px;height:0.8px;background:rgba(0,0,0,0.28)"></div>
<div class="t" style="left:590.10px;top:373.42px;height:14.93px;line-height:14.93px;">225</div>
<div class="t" style="left:610.40px;top:373.42px;height:14.93px;line-height:14.93px;">Olive Dye<span class="sup">1</span></div>
<div class="x" style="left:677.50px;width:45.00px;top:372.82px;height:14.93px;line-height:14.93px;color:#f6f6f6;text-shadow:0 0 1px #000,0 0 1.5px #000,0 0 2px rgba(0,0,0,0.6)">#b5b65e</div>
<div class="a" style="left:588.30px;top:401.48px;width:88.70px;height:0.8px;background:#051219"></div>
<div class="a" style="left:677.00px;top:387.15px;width:45.00px;height:14.93px;background:#595959"></div>
<div class="a" style="left:677.00px;top:401.28px;width:45.00px;height:0.8px;background:rgba(0,0,0,0.28)"></div>
<div class="t" style="left:590.10px;top:388.35px;height:14.93px;line-height:14.93px;">226</div>
<div class="t" style="left:610.40px;top:388.35px;height:14.93px;line-height:14.93px;">Slate Dye<span class="sup">1</span></div>
<div class="x" style="left:677.50px;width:45.00px;top:387.75px;height:14.93px;line-height:14.93px;text-shadow:0.4px 0.4px 0.6px #000">#595959</div>
<div class="a" style="left:588.30px;top:4.2px;width:133.70px;height:12.30px;background:#020609;border-top:1px solid #22404c"></div>
<div class="a" style="left:588.30px;top:15.90px;width:133.70px;height:1px;background:#1c313a"></div>
<div class="h" style="left:591.30px;top:7.30px;height:10px;line-height:10px;">ID</div>
<div class="h" style="left:607.80px;top:7.30px;height:10px;line-height:10px;width:62.00px;text-align:center;transform-origin:50% 50%;">Description</div>
<div class="h" style="left:679.50px;top:7.30px;height:10px;line-height:10px;">Hex Code</div>
<div class="dot" style="left:601.70px;top:9.9px"></div>
<div class="dot" style="left:670.90px;top:9.9px"></div>
<div class="dot" style="left:715.90px;top:9.9px"></div>
<div class="a" style="left:607.80px;top:4.7px;width:1px;height:11.80px;background:#16262e"></div>
<div class="a" style="left:677.00px;top:4.7px;width:1px;height:11.80px;background:#16262e"></div>
<div class="a" style="left:722.00px;top:0px;width:1px;height:16.50px;background:#587a8c"></div>
<div class="a" style="left:722.00px;top:16.50px;width:1px;height:385.58px;background:rgba(140,170,190,0.32)"></div>
<div class="a" style="left:0px;top:401.8px;width:17px;height:4px;background:#c8a080"></div>
<div class="a" style="left:17px;top:401.8px;width:43px;height:4px;background:#2c1456"></div>
<div class="a" style="left:60px;top:401.8px;width:12px;height:4px;background:#4a2a80"></div>
<div class="a" style="left:72px;top:401.8px;width:33px;height:4px;background:#0e0c1c"></div>
<div class="a" style="left:105px;top:401.8px;width:23px;height:4px;background:#1a1036"></div>
<div class="a" style="left:128px;top:401.8px;width:27px;height:4px;background:#3e14a0"></div>
<div class="a" style="left:155px;top:401.8px;width:4px;height:4px;background:#201030"></div>
<div class="a" style="left:159px;top:401.8px;width:416px;height:4px;background:#d4ac88"></div>
<div class="a" style="left:575px;top:401.8px;width:35px;height:4px;background:#0a0a12"></div>
<div class="a" style="left:610px;top:401.8px;width:30px;height:4px;background:#2a1a40"></div>
<div class="a" style="left:640px;top:401.8px;width:25px;height:4px;background:#5020a0"></div>
<div class="a" style="left:665px;top:401.8px;width:4px;height:4px;background:#201030"></div>
<div class="a" style="left:669px;top:401.8px;width:51px;height:4px;background:#d6ae8c"></div>
</body></html>
